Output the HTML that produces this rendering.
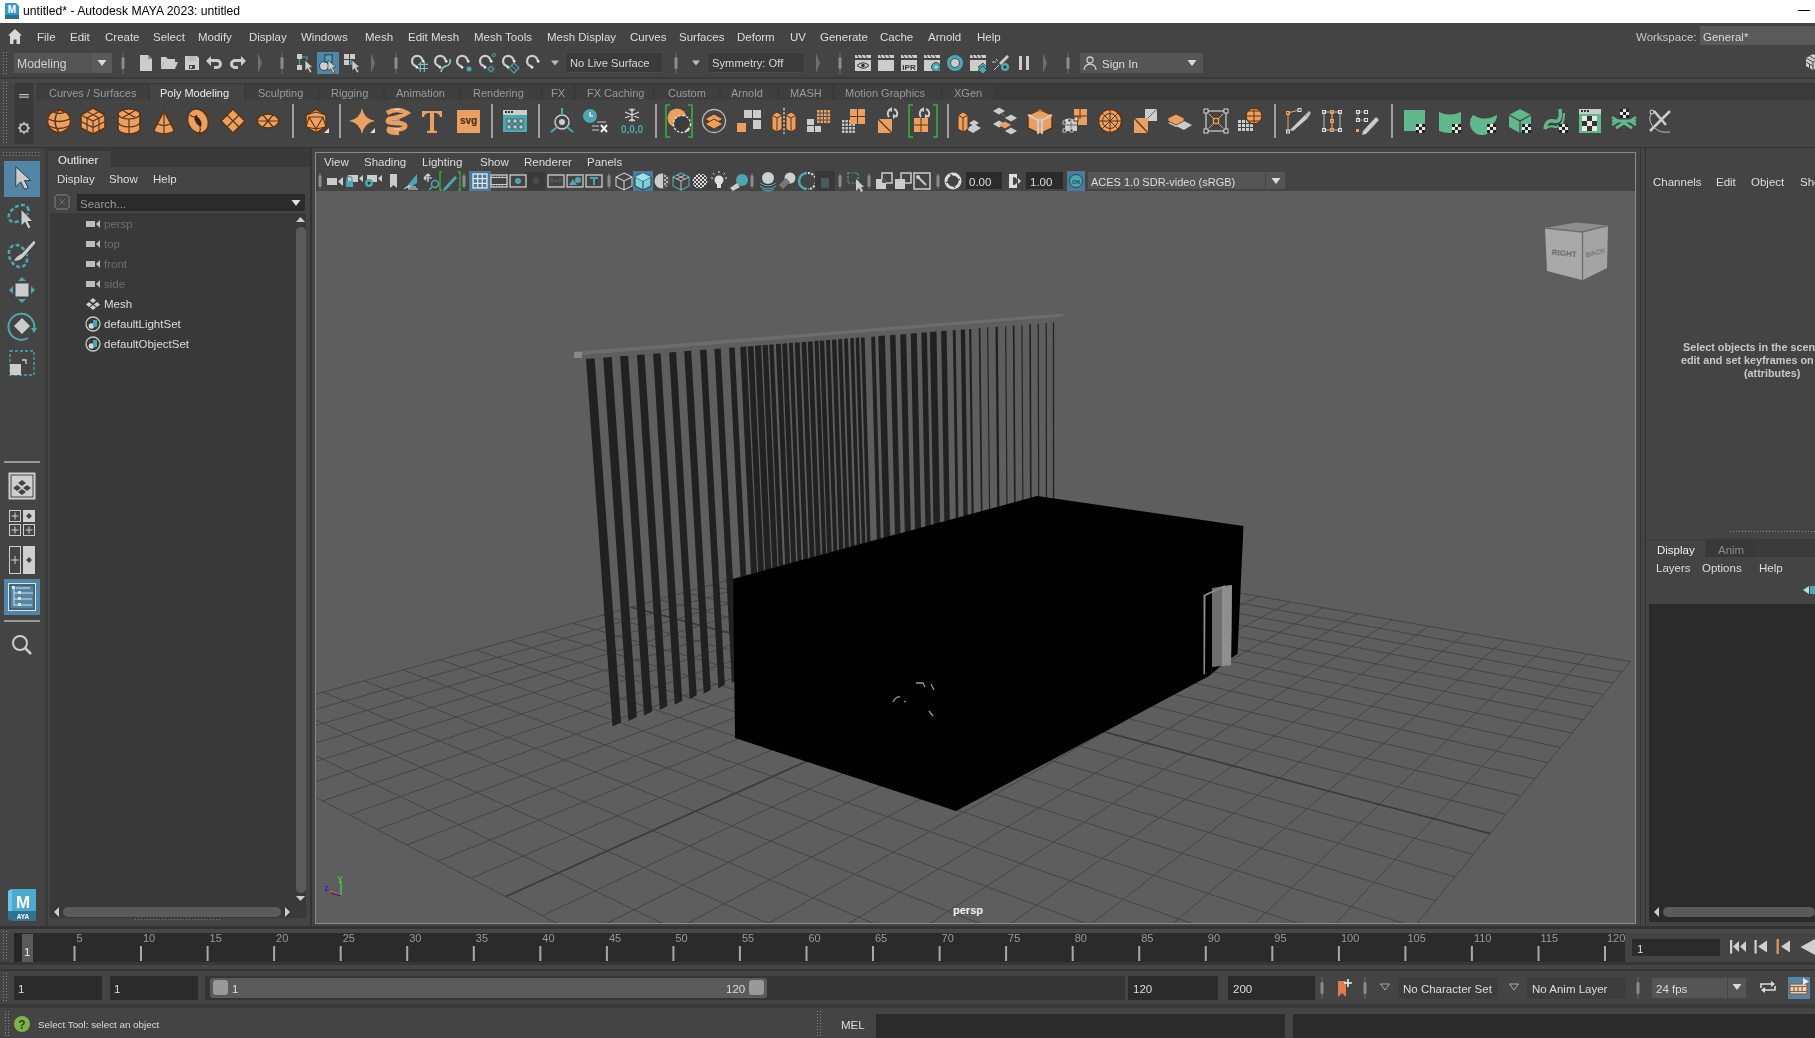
<!DOCTYPE html><html><head><meta charset="utf-8"><style>html,body{margin:0;padding:0;width:1815px;height:1038px;overflow:hidden;background:#444;font-family:"Liberation Sans", sans-serif;}
.b{position:absolute;}
.t{position:absolute;white-space:nowrap;line-height:1;will-change:transform;}
</style></head><body><div class="b" style="left:0px;top:0px;width:1815px;height:23px;background:#ffffff;"></div><svg class="b" style="left:4px;top:2px" width="16" height="18" viewBox="0 0 16 18"><path d="M1 1h11l3 3v13H1z" fill="#3d97c3"/><path d="M1 13h14v4H1z" fill="#2f6f8e"/><text x="8" y="11" font-family="Liberation Sans" font-size="10" font-weight="bold" fill="#fff" text-anchor="middle">M</text></svg><div class="t" style="left:23px;top:5px;font-size:12.2px;color:#000;font-weight:normal;">untitled* - Autodesk MAYA 2023: untitled</div><div class="b" style="left:1798px;top:10px;width:12px;height:1px;background:#000;"></div><div class="b" style="left:0px;top:23px;width:1815px;height:27px;background:#444444;"></div><div class="t" style="left:37px;top:32px;font-size:11.5px;color:#dddddd;font-weight:normal;">File</div><div class="t" style="left:70px;top:32px;font-size:11.5px;color:#dddddd;font-weight:normal;">Edit</div><div class="t" style="left:105px;top:32px;font-size:11.5px;color:#dddddd;font-weight:normal;">Create</div><div class="t" style="left:153px;top:32px;font-size:11.5px;color:#dddddd;font-weight:normal;">Select</div><div class="t" style="left:198px;top:32px;font-size:11.5px;color:#dddddd;font-weight:normal;">Modify</div><div class="t" style="left:249px;top:32px;font-size:11.5px;color:#dddddd;font-weight:normal;">Display</div><div class="t" style="left:301px;top:32px;font-size:11.5px;color:#dddddd;font-weight:normal;">Windows</div><div class="t" style="left:365px;top:32px;font-size:11.5px;color:#dddddd;font-weight:normal;">Mesh</div><div class="t" style="left:408px;top:32px;font-size:11.5px;color:#dddddd;font-weight:normal;">Edit Mesh</div><div class="t" style="left:474px;top:32px;font-size:11.5px;color:#dddddd;font-weight:normal;">Mesh Tools</div><div class="t" style="left:547px;top:32px;font-size:11.5px;color:#dddddd;font-weight:normal;">Mesh Display</div><div class="t" style="left:630px;top:32px;font-size:11.5px;color:#dddddd;font-weight:normal;">Curves</div><div class="t" style="left:679px;top:32px;font-size:11.5px;color:#dddddd;font-weight:normal;">Surfaces</div><div class="t" style="left:737px;top:32px;font-size:11.5px;color:#dddddd;font-weight:normal;">Deform</div><div class="t" style="left:790px;top:32px;font-size:11.5px;color:#dddddd;font-weight:normal;">UV</div><div class="t" style="left:820px;top:32px;font-size:11.5px;color:#dddddd;font-weight:normal;">Generate</div><div class="t" style="left:880px;top:32px;font-size:11.5px;color:#dddddd;font-weight:normal;">Cache</div><div class="t" style="left:928px;top:32px;font-size:11.5px;color:#dddddd;font-weight:normal;">Arnold</div><div class="t" style="left:977px;top:32px;font-size:11.5px;color:#dddddd;font-weight:normal;">Help</div><div class="t" style="left:1636px;top:32px;font-size:11.5px;color:#c8c8c8;font-weight:normal;">Workspace:</div><div class="b" style="left:1700px;top:26px;width:115px;height:19px;background:#5a5a5a;"></div><div class="t" style="left:1703px;top:32px;font-size:11.5px;color:#d8d8d8;font-weight:normal;">General*</div><div class="b" style="left:14px;top:53px;width:98px;height:20px;background:#555555;"></div><div class="b" style="left:92px;top:53px;width:20px;height:20px;background:#5a5a5a;"></div><div class="t" style="left:17px;top:58px;font-size:12.2px;color:#d0d0d0;font-weight:normal;">Modeling</div><div class="b" style="left:565px;top:52px;width:98px;height:21px;background:#3b3b3b;border:1px solid #484848;box-sizing:border-box"></div><div class="t" style="left:570px;top:58px;font-size:11.2px;color:#d8d8d8;font-weight:normal;">No Live Surface</div><div class="b" style="left:707px;top:52px;width:98px;height:21px;background:#3b3b3b;border:1px solid #484848;box-sizing:border-box"></div><div class="t" style="left:712px;top:58px;font-size:11.2px;color:#d8d8d8;font-weight:normal;">Symmetry: Off</div><div class="b" style="left:1080px;top:53px;width:123px;height:20px;background:#555555;"></div><div class="t" style="left:1102px;top:59px;font-size:11.5px;color:#dcdcdc;font-weight:normal;">Sign In</div><div class="b" style="left:0px;top:77px;width:1815px;height:2px;background:#3a3a3a;"></div><div class="b" style="left:0px;top:79px;width:1815px;height:4px;background:#484848;"></div><div class="b" style="left:37px;top:83px;width:1778px;height:17px;background:#3a3a3a;"></div><div class="b" style="left:15px;top:83px;width:18px;height:61px;background:#393939;"></div><div class="b" style="left:39px;top:85px;width:109px;height:15px;background:#3f3f3f;"></div><div class="t" style="left:49px;top:88px;font-size:11px;color:#9a9a9a;font-weight:normal;">Curves / Surfaces</div><div class="b" style="left:150px;top:84px;width:94px;height:17px;background:#444444;"></div><div class="t" style="left:160px;top:88px;font-size:11px;color:#eeeeee;font-weight:normal;">Poly Modeling</div><div class="b" style="left:247px;top:85px;width:71px;height:15px;background:#3f3f3f;"></div><div class="t" style="left:258px;top:88px;font-size:11px;color:#9a9a9a;font-weight:normal;">Sculpting</div><div class="b" style="left:320px;top:85px;width:63px;height:15px;background:#3f3f3f;"></div><div class="t" style="left:331px;top:88px;font-size:11px;color:#9a9a9a;font-weight:normal;">Rigging</div><div class="b" style="left:386px;top:85px;width:73px;height:15px;background:#3f3f3f;"></div><div class="t" style="left:396px;top:88px;font-size:11px;color:#9a9a9a;font-weight:normal;">Animation</div><div class="b" style="left:462px;top:85px;width:78px;height:15px;background:#3f3f3f;"></div><div class="t" style="left:473px;top:88px;font-size:11px;color:#9a9a9a;font-weight:normal;">Rendering</div><div class="b" style="left:543px;top:85px;width:30px;height:15px;background:#3f3f3f;"></div><div class="t" style="left:551px;top:88px;font-size:11px;color:#9a9a9a;font-weight:normal;">FX</div><div class="b" style="left:576px;top:85px;width:77px;height:15px;background:#3f3f3f;"></div><div class="t" style="left:587px;top:88px;font-size:11px;color:#9a9a9a;font-weight:normal;">FX Caching</div><div class="b" style="left:655px;top:85px;width:64px;height:15px;background:#3f3f3f;"></div><div class="t" style="left:668px;top:88px;font-size:11px;color:#9a9a9a;font-weight:normal;">Custom</div><div class="b" style="left:721px;top:85px;width:56px;height:15px;background:#3f3f3f;"></div><div class="t" style="left:731px;top:88px;font-size:11px;color:#9a9a9a;font-weight:normal;">Arnold</div><div class="b" style="left:780px;top:85px;width:52px;height:15px;background:#3f3f3f;"></div><div class="t" style="left:790px;top:88px;font-size:11px;color:#9a9a9a;font-weight:normal;">MASH</div><div class="b" style="left:835px;top:85px;width:106px;height:15px;background:#3f3f3f;"></div><div class="t" style="left:845px;top:88px;font-size:11px;color:#9a9a9a;font-weight:normal;">Motion Graphics</div><div class="b" style="left:943px;top:85px;width:50px;height:15px;background:#3f3f3f;"></div><div class="t" style="left:954px;top:88px;font-size:11px;color:#9a9a9a;font-weight:normal;">XGen</div><div class="b" style="left:33px;top:100px;width:1782px;height:44px;background:#444444;"></div><div class="b" style="left:0px;top:147px;width:1815px;height:2px;background:#353535;"></div><div class="b" style="left:0px;top:148px;width:45px;height:778px;background:#444444;"></div><div class="b" style="left:4px;top:161px;width:36px;height:36px;background:#5285a6;"></div><div class="b" style="left:45px;top:148px;width:3px;height:778px;background:#3a3a3a;"></div><div class="b" style="left:48px;top:148px;width:263px;height:778px;background:#444444;"></div><div class="b" style="left:48px;top:148px;width:263px;height:19px;background:#393939;"></div><div class="b" style="left:48px;top:151px;width:63px;height:16px;background:#444444;"></div><div class="t" style="left:58px;top:155px;font-size:11.5px;color:#eeeeee;font-weight:normal;">Outliner</div><div class="t" style="left:57px;top:174px;font-size:11.5px;color:#dddddd;font-weight:normal;">Display</div><div class="t" style="left:109px;top:174px;font-size:11.5px;color:#dddddd;font-weight:normal;">Show</div><div class="t" style="left:153px;top:174px;font-size:11.5px;color:#dddddd;font-weight:normal;">Help</div><div class="b" style="left:77px;top:194px;width:228px;height:17px;background:#2b2b2b;"></div><div class="t" style="left:80px;top:199px;font-size:11.5px;color:#9a9a9a;font-weight:normal;">Search...</div><div class="b" style="left:50px;top:213px;width:256px;height:705px;background:#393939;"></div><div class="t" style="left:104px;top:219px;font-size:11.5px;color:#6e6e6e;font-weight:normal;">persp</div><div class="t" style="left:104px;top:239px;font-size:11.5px;color:#6e6e6e;font-weight:normal;">top</div><div class="t" style="left:104px;top:259px;font-size:11.5px;color:#6e6e6e;font-weight:normal;">front</div><div class="t" style="left:104px;top:279px;font-size:11.5px;color:#6e6e6e;font-weight:normal;">side</div><div class="t" style="left:104px;top:299px;font-size:11.5px;color:#dddddd;font-weight:normal;">Mesh</div><div class="t" style="left:104px;top:319px;font-size:11.5px;color:#dddddd;font-weight:normal;">defaultLightSet</div><div class="t" style="left:104px;top:339px;font-size:11.5px;color:#dddddd;font-weight:normal;">defaultObjectSet</div><div class="b" style="left:296px;top:227px;width:10px;height:666px;background:#5b5b5b;border-radius:5px"></div><div class="b" style="left:63px;top:907px;width:218px;height:10px;background:#5b5b5b;border-radius:5px"></div><div class="b" style="left:310px;top:148px;width:2px;height:778px;background:#333333;"></div><div class="b" style="left:312px;top:148px;width:1329px;height:779px;background:#444444;"></div><div class="b" style="left:316px;top:153px;width:1319px;height:17px;background:#444444;"></div><div class="t" style="left:324px;top:157px;font-size:11.5px;color:#dddddd;font-weight:normal;">View</div><div class="t" style="left:364px;top:157px;font-size:11.5px;color:#dddddd;font-weight:normal;">Shading</div><div class="t" style="left:422px;top:157px;font-size:11.5px;color:#dddddd;font-weight:normal;">Lighting</div><div class="t" style="left:480px;top:157px;font-size:11.5px;color:#dddddd;font-weight:normal;">Show</div><div class="t" style="left:524px;top:157px;font-size:11.5px;color:#dddddd;font-weight:normal;">Renderer</div><div class="t" style="left:587px;top:157px;font-size:11.5px;color:#dddddd;font-weight:normal;">Panels</div><div class="b" style="left:316px;top:170px;width:1319px;height:21px;background:#444444;"></div><div class="b" style="left:966px;top:172px;width:36px;height:17px;background:#2b2b2b;"></div><div class="t" style="left:969px;top:177px;font-size:11.5px;color:#dddddd;font-weight:normal;">0.00</div><div class="b" style="left:1026px;top:172px;width:37px;height:17px;background:#2b2b2b;"></div><div class="t" style="left:1030px;top:177px;font-size:11.5px;color:#dddddd;font-weight:normal;">1.00</div><div class="b" style="left:1067px;top:171px;width:18px;height:19px;background:#4a7a9a;"></div><div class="b" style="left:1088px;top:172px;width:197px;height:17px;background:#555555;"></div><div class="t" style="left:1091px;top:177px;font-size:11px;color:#dddddd;font-weight:normal;">ACES 1.0 SDR-video (sRGB)</div><svg class="b" style="left:316px;top:191px" width="1319" height="732" viewBox="316 191 1319 732"><rect x="316" y="191" width="1319" height="732" fill="#5e5e5e"/><path d="M898.6 533.2L1630.4 661.6M898.6 533.2L186.7 729.8M880.4 538.3L1621.9 672.0M920.0 537.0L206.9 740.3M861.6 543.4L1612.9 683.0M941.9 540.8L228.0 751.4M842.2 548.8L1603.5 694.6M964.4 544.8L250.1 762.9M822.1 554.4L1593.6 706.8M987.5 548.8L273.2 775.0M801.2 560.1L1583.1 719.6M1011.2 553.0L297.4 787.6M779.5 566.1L1572.1 733.1M1035.6 557.3L322.7 800.9M757.1 572.3L1560.4 747.5M1060.7 561.7L349.4 814.8M733.8 578.7L1548.0 762.7M1086.5 566.2L377.4 829.4M709.6 585.4L1534.9 778.8M1113.1 570.9L406.9 844.9M684.4 592.4L1520.9 795.9M1140.5 575.6L438.1 861.1M658.2 599.6L1506.0 814.2M1168.6 580.6L470.9 878.3M602.5 615.0L1473.2 854.4M1227.6 590.9L542.4 915.7M572.9 623.2L1455.0 876.8M1258.5 596.3L581.5 936.1M541.9 631.7L1435.4 900.8M1290.3 601.9L623.0 957.8M509.6 640.6L1414.3 926.6M1323.2 607.7L667.2 980.9M475.7 650.0L1391.6 954.6M1357.2 613.7L714.3 1005.5M440.3 659.8L1366.9 984.9M1392.3 619.8L764.7 1031.9M403.1 670.0L1340.0 1017.9M1428.6 626.2L818.8 1060.1M364.1 680.8L1310.6 1053.9M1466.2 632.8L876.9 1090.5M323.2 692.1L1278.4 1093.4M1505.0 639.6L939.4 1123.2M280.1 704.0L1243.0 1136.9M1545.3 646.6L1007.1 1158.6M234.6 716.5L1203.7 1185.0M1587.1 654.0L1080.4 1196.9M186.7 729.8L1160.1 1238.6M1630.4 661.6L1160.1 1238.6" stroke="#454545" stroke-width="1" fill="none"/><path d="M630.9 607.1L1490.2 833.6M1197.7 585.7L505.6 896.5" stroke="#3c3c3c" stroke-width="1.8" fill="none"/><path d="M586.0 359.0L594.6 358.3L621.1 722.5L612.5 726.5ZM603.2 357.7L611.7 357.0L636.9 717.0L628.4 721.0ZM620.1 356.3L628.1 355.7L652.1 711.6L644.1 715.6ZM637.0 355.0L644.5 354.4L667.3 706.1L659.8 710.1ZM653.1 353.8L660.6 353.2L682.3 700.7L674.8 704.7ZM669.1 352.5L676.1 352.0L696.7 695.2L689.7 699.2ZM684.2 351.3L691.2 350.8L710.7 689.8L703.7 693.8ZM700.0 350.1L706.5 349.6L724.9 684.4L718.4 688.4ZM714.4 349.0L720.7 348.5L738.2 678.9L731.9 682.9ZM729.0 347.8L734.7 347.4L751.2 673.5L745.5 677.5ZM740.2 346.9L746.3 346.5L763.1 700.0L757.0 700.0ZM747.7 346.4L753.5 345.9L769.9 700.0L764.1 700.0ZM754.9 345.8L761.1 345.3L777.2 700.0L771.0 700.0ZM762.5 345.2L767.8 344.8L783.5 700.0L778.2 700.0ZM769.2 344.7L773.6 344.3L788.9 700.0L784.5 700.0ZM775.9 344.1L780.8 343.8L795.8 700.0L790.9 700.0ZM782.2 343.7L787.1 343.3L801.8 700.0L796.9 700.0ZM788.9 343.1L792.9 342.8L807.2 700.0L803.2 700.0ZM794.8 342.7L799.6 342.3L813.6 700.0L808.8 700.0ZM801.5 342.2L806.3 341.8L820.0 700.0L815.2 700.0ZM807.8 341.7L812.6 341.3L826.0 700.0L821.2 700.0ZM814.5 341.1L818.5 340.8L831.5 700.0L827.5 700.0ZM819.7 340.7L824.2 340.4L837.0 700.0L832.5 700.0ZM826.0 340.2L830.0 339.9L842.5 700.0L838.5 700.0ZM831.9 339.8L836.3 339.4L848.5 700.0L844.1 700.0ZM838.1 339.3L842.1 339.0L854.0 700.0L850.0 700.0ZM844.0 338.8L847.9 338.5L859.4 700.0L855.5 700.0ZM850.2 338.3L853.8 338.1L865.0 700.0L861.4 700.0ZM855.6 337.9L859.2 337.6L870.1 700.0L866.5 700.0ZM861.0 337.5L864.6 337.2L875.2 700.0L871.6 700.0ZM871.2 336.7L875.1 336.4L885.2 700.0L881.3 700.0ZM878.3 336.1L884.9 335.6L894.6 700.0L888.0 700.0ZM890.0 335.2L895.5 334.8L904.6 700.0L899.1 700.0ZM900.2 334.4L906.2 334.0L914.7 700.0L908.7 700.0ZM910.7 333.6L916.8 333.1L924.8 700.0L918.7 700.0ZM921.4 332.8L926.9 332.3L934.3 700.0L928.8 700.0ZM929.9 332.1L936.5 331.6L943.4 700.0L936.8 700.0ZM941.1 331.2L946.6 330.8L952.9 700.0L947.4 700.0ZM952.8 330.3L955.6 330.1L961.3 700.0L958.5 700.0ZM960.7 329.7L965.1 329.4L970.4 700.0L966.0 700.0ZM969.1 329.0L971.3 328.9L976.1 700.0L973.9 700.0ZM978.7 328.3L980.4 328.2L984.7 700.0L983.0 700.0ZM987.1 327.6L988.2 327.5L992.1 700.0L991.0 700.0ZM995.5 327.0L997.8 326.8L1001.2 700.0L998.9 700.0ZM1005.1 326.2L1006.2 326.1L1009.0 700.0L1007.9 700.0ZM1012.8 325.6L1014.5 325.5L1017.0 700.0L1015.3 700.0ZM1021.4 325.0L1022.5 324.9L1024.4 700.0L1023.3 700.0ZM1029.3 324.3L1030.9 324.2L1032.4 700.0L1030.8 700.0ZM1037.6 323.7L1038.8 323.6L1039.9 700.0L1038.7 700.0ZM1045.6 323.1L1046.8 323.0L1047.4 700.0L1046.2 700.0ZM1052.8 322.5L1054.1 322.4L1054.3 700.0L1053.0 700.0Z" fill="#212121"/><path d="M576 351.5L1063 313.5L1063 316.5L576 355.5Z" fill="#6c6c6c"/><rect x="574" y="352" width="8" height="6" fill="#888888"/><path d="M733 579L1037 496L1243.5 526L1237.5 654L1228 660L1209 676L956 811L735 738Z" fill="#000"/><path d="M1212 588L1232 585L1231 665L1212 667Z" fill="#6e6e6e"/><path d="M1222 586.5L1232 585L1231 665L1222 666Z" fill="#8e8e8e"/><path d="M1203.5 595L1225 585L1225.5 586.5L1205.5 596L1205 674L1203.5 674Z" fill="#8c8c8c"/><path d="M893 702Q896 696 900 697M916 683H923L925 687M931 684L934 690M929 711L933 716M904 702l2 -1" stroke="#9a9a9a" stroke-width="1.3" fill="none"/><path d="M1545 228L1576 222.5L1608 225.5L1582 232Z" fill="#8e8e8e"/><path d="M1545 228L1582 232L1582 280L1547 271Z" fill="#a9a9a9"/><path d="M1583 232L1608 225.5L1607 268L1583 280Z" fill="#a4a4a4"/><path d="M1545 228L1582 232L1608 225.5M1582.5 232V280" stroke="#6e6e6e" stroke-width="1.3" fill="none"/><text x="1564" y="256" font-family="Liberation Sans" font-size="8" font-weight="bold" fill="#6a6a6a" text-anchor="middle" transform="rotate(5 1564 256)">RIGHT</text><text x="1596" y="255" font-family="Liberation Sans" font-size="7" font-weight="bold" fill="#7a7a7a" text-anchor="middle" transform="rotate(-14 1596 255)">BACK</text><path d="M341 896V881" stroke="#4fd04f" stroke-width="1.3"/><path d="M341 896L330 891" stroke="#d04a4a" stroke-width="2"/><path d="M341 896L331 893" stroke="#1a1aa0" stroke-width="1.3"/><text x="338" y="881" font-family="Liberation Sans" font-size="9" fill="#4fd04f">y</text><text x="324" y="891" font-family="Liberation Sans" font-size="9" font-weight="bold" fill="#2a2ad0">z</text><text x="968" y="914" font-family="Liberation Sans" font-size="11" font-weight="bold" fill="#f0f0f0" text-anchor="middle">persp</text></svg><div class="b" style="left:315px;top:152px;width:1321px;height:772px;background:transparent;border:1px solid #8a8a8a;box-sizing:border-box"></div><div class="b" style="left:1640px;top:148px;width:1px;height:778px;background:#333333;"></div><div class="b" style="left:1641px;top:148px;width:174px;height:778px;background:#444444;"></div><div class="b" style="left:1645px;top:148px;width:1px;height:778px;background:#303030;"></div><div class="t" style="left:1653px;top:177px;font-size:11.5px;color:#dddddd;font-weight:normal;">Channels</div><div class="t" style="left:1716px;top:177px;font-size:11.5px;color:#dddddd;font-weight:normal;">Edit</div><div class="t" style="left:1751px;top:177px;font-size:11.5px;color:#dddddd;font-weight:normal;">Object</div><div class="t" style="left:1800px;top:177px;font-size:11.5px;color:#dddddd;font-weight:normal;">Show</div><div class="t" style="left:1682.6px;top:342px;font-size:10.8px;font-weight:bold;color:#c8c8c8">Select objects in the scene to</div><div class="t" style="left:1681px;top:355px;font-size:10.8px;font-weight:bold;color:#c8c8c8">edit and set keyframes on channels</div><div class="t" style="left:1743.7px;top:368px;font-size:10.8px;font-weight:bold;color:#c8c8c8">(attributes)</div><div class="b" style="left:1647px;top:539px;width:168px;height:18px;background:#3b3b3b;"></div><div class="b" style="left:1647px;top:540px;width:58px;height:17px;background:#444444;"></div><div class="b" style="left:1706px;top:541px;width:49px;height:16px;background:#383838;"></div><div class="t" style="left:1657px;top:545px;font-size:11.5px;color:#eeeeee;font-weight:normal;">Display</div><div class="t" style="left:1718px;top:545px;font-size:11.5px;color:#8a8a8a;font-weight:normal;">Anim</div><div class="t" style="left:1656px;top:563px;font-size:11.5px;color:#dddddd;font-weight:normal;">Layers</div><div class="t" style="left:1702px;top:563px;font-size:11.5px;color:#dddddd;font-weight:normal;">Options</div><div class="t" style="left:1759px;top:563px;font-size:11.5px;color:#dddddd;font-weight:normal;">Help</div><div class="b" style="left:1649px;top:604px;width:166px;height:318px;background:#2b2b2b;"></div><div class="b" style="left:1663px;top:907px;width:152px;height:10px;background:#5b5b5b;border-radius:5px"></div><div class="b" style="left:0px;top:926px;width:1815px;height:3px;background:#333333;"></div><div class="b" style="left:0px;top:929px;width:1815px;height:4px;background:#484848;"></div><div class="b" style="left:0px;top:962px;width:1815px;height:3px;background:#373737;"></div><div class="b" style="left:14px;top:933px;width:1611px;height:29px;background:#2b2b2b;"></div><div class="b" style="left:14px;top:933px;width:8px;height:29px;background:#262626;"></div><div class="b" style="left:22px;top:934px;width:11px;height:28px;background:#5a5a5a;"></div><div class="t" style="left:24px;top:947px;font-size:11.5px;color:#eeeeee;font-weight:normal;">1</div><svg class="b" style="left:0;top:0" width="1815" height="1038"><rect x="73.5" y="946" width="2" height="15" fill="#a8a8a8"/><text x="76.5" y="942" font-family="Liberation Sans" font-size="11" fill="#9a9a9a">5</text><rect x="140.0" y="946" width="2" height="15" fill="#a8a8a8"/><text x="143.0" y="942" font-family="Liberation Sans" font-size="11" fill="#9a9a9a">10</text><rect x="206.6" y="946" width="2" height="15" fill="#a8a8a8"/><text x="209.6" y="942" font-family="Liberation Sans" font-size="11" fill="#9a9a9a">15</text><rect x="273.1" y="946" width="2" height="15" fill="#a8a8a8"/><text x="276.1" y="942" font-family="Liberation Sans" font-size="11" fill="#9a9a9a">20</text><rect x="339.7" y="946" width="2" height="15" fill="#a8a8a8"/><text x="342.7" y="942" font-family="Liberation Sans" font-size="11" fill="#9a9a9a">25</text><rect x="406.2" y="946" width="2" height="15" fill="#a8a8a8"/><text x="409.2" y="942" font-family="Liberation Sans" font-size="11" fill="#9a9a9a">30</text><rect x="472.8" y="946" width="2" height="15" fill="#a8a8a8"/><text x="475.8" y="942" font-family="Liberation Sans" font-size="11" fill="#9a9a9a">35</text><rect x="539.3" y="946" width="2" height="15" fill="#a8a8a8"/><text x="542.3" y="942" font-family="Liberation Sans" font-size="11" fill="#9a9a9a">40</text><rect x="605.9" y="946" width="2" height="15" fill="#a8a8a8"/><text x="608.9" y="942" font-family="Liberation Sans" font-size="11" fill="#9a9a9a">45</text><rect x="672.4" y="946" width="2" height="15" fill="#a8a8a8"/><text x="675.4" y="942" font-family="Liberation Sans" font-size="11" fill="#9a9a9a">50</text><rect x="738.9" y="946" width="2" height="15" fill="#a8a8a8"/><text x="741.9" y="942" font-family="Liberation Sans" font-size="11" fill="#9a9a9a">55</text><rect x="805.5" y="946" width="2" height="15" fill="#a8a8a8"/><text x="808.5" y="942" font-family="Liberation Sans" font-size="11" fill="#9a9a9a">60</text><rect x="872.0" y="946" width="2" height="15" fill="#a8a8a8"/><text x="875.0" y="942" font-family="Liberation Sans" font-size="11" fill="#9a9a9a">65</text><rect x="938.6" y="946" width="2" height="15" fill="#a8a8a8"/><text x="941.6" y="942" font-family="Liberation Sans" font-size="11" fill="#9a9a9a">70</text><rect x="1005.1" y="946" width="2" height="15" fill="#a8a8a8"/><text x="1008.1" y="942" font-family="Liberation Sans" font-size="11" fill="#9a9a9a">75</text><rect x="1071.7" y="946" width="2" height="15" fill="#a8a8a8"/><text x="1074.7" y="942" font-family="Liberation Sans" font-size="11" fill="#9a9a9a">80</text><rect x="1138.2" y="946" width="2" height="15" fill="#a8a8a8"/><text x="1141.2" y="942" font-family="Liberation Sans" font-size="11" fill="#9a9a9a">85</text><rect x="1204.8" y="946" width="2" height="15" fill="#a8a8a8"/><text x="1207.8" y="942" font-family="Liberation Sans" font-size="11" fill="#9a9a9a">90</text><rect x="1271.3" y="946" width="2" height="15" fill="#a8a8a8"/><text x="1274.3" y="942" font-family="Liberation Sans" font-size="11" fill="#9a9a9a">95</text><rect x="1337.9" y="946" width="2" height="15" fill="#a8a8a8"/><text x="1340.9" y="942" font-family="Liberation Sans" font-size="11" fill="#9a9a9a">100</text><rect x="1404.4" y="946" width="2" height="15" fill="#a8a8a8"/><text x="1407.4" y="942" font-family="Liberation Sans" font-size="11" fill="#9a9a9a">105</text><rect x="1470.9" y="946" width="2" height="15" fill="#a8a8a8"/><text x="1473.9" y="942" font-family="Liberation Sans" font-size="11" fill="#9a9a9a">110</text><rect x="1537.5" y="946" width="2" height="15" fill="#a8a8a8"/><text x="1540.5" y="942" font-family="Liberation Sans" font-size="11" fill="#9a9a9a">115</text><rect x="1604.0" y="946" width="2" height="15" fill="#a8a8a8"/><text x="1607.0" y="942" font-family="Liberation Sans" font-size="11" fill="#9a9a9a">120</text></svg><div class="b" style="left:1632px;top:939px;width:88px;height:17px;background:#2b2b2b;"></div><div class="t" style="left:1637px;top:944px;font-size:11.5px;color:#dddddd;font-weight:normal;">1</div><div class="b" style="left:0px;top:965px;width:1815px;height:11px;background:#444444;"></div><div class="b" style="left:0px;top:969px;width:1815px;height:2px;background:#363636;"></div><div class="b" style="left:14px;top:976px;width:88px;height:24px;background:#2b2b2b;"></div><div class="t" style="left:18px;top:984px;font-size:11.5px;color:#dddddd;font-weight:normal;">1</div><div class="b" style="left:110px;top:976px;width:88px;height:24px;background:#2b2b2b;"></div><div class="t" style="left:114px;top:984px;font-size:11.5px;color:#dddddd;font-weight:normal;">1</div><div class="b" style="left:205px;top:976px;width:920px;height:24px;background:#353535;"></div><div class="b" style="left:210px;top:978px;width:557px;height:20px;background:#5a5a5a;border-radius:3px"></div><div class="b" style="left:213px;top:980px;width:15px;height:15px;background:#999999;border-radius:3px"></div><div class="b" style="left:749px;top:980px;width:15px;height:15px;background:#999999;border-radius:3px"></div><div class="t" style="left:232px;top:984px;font-size:11.5px;color:#dddddd;font-weight:normal;">1</div><div class="t" style="left:726px;top:984px;font-size:11.5px;color:#dddddd;font-weight:normal;">120</div><div class="b" style="left:1128px;top:976px;width:90px;height:24px;background:#2b2b2b;"></div><div class="t" style="left:1133px;top:984px;font-size:11.5px;color:#dddddd;font-weight:normal;">120</div><div class="b" style="left:1228px;top:976px;width:87px;height:24px;background:#2b2b2b;"></div><div class="t" style="left:1233px;top:984px;font-size:11.5px;color:#dddddd;font-weight:normal;">200</div><div class="b" style="left:1398px;top:977px;width:100px;height:22px;background:#3d3d3d;"></div><div class="t" style="left:1403px;top:984px;font-size:11.5px;color:#dddddd;font-weight:normal;">No Character Set</div><div class="b" style="left:1527px;top:977px;width:99px;height:22px;background:#3d3d3d;"></div><div class="t" style="left:1532px;top:984px;font-size:11.5px;color:#dddddd;font-weight:normal;">No Anim Layer</div><div class="b" style="left:1652px;top:978px;width:94px;height:20px;background:#555555;"></div><div class="t" style="left:1656px;top:984px;font-size:11.5px;color:#dddddd;font-weight:normal;">24 fps</div><div class="b" style="left:1788px;top:977px;width:22px;height:22px;background:#5285a6;"></div><div class="b" style="left:0px;top:1004px;width:1815px;height:4px;background:#3a3a3a;"></div><div class="b" style="left:876px;top:1014px;width:409px;height:24px;background:#2b2b2b;"></div><div class="b" style="left:1293px;top:1014px;width:522px;height:24px;background:#2b2b2b;"></div><div class="t" style="left:841px;top:1020px;font-size:11.5px;color:#dddddd;font-weight:normal;">MEL</div><svg class="b" style="left:13px;top:1015px" width="18" height="18"><circle cx="9" cy="9" r="8" fill="#7fb24a"/><text x="9" y="13.5" font-family="Liberation Sans" font-size="12" font-weight="bold" fill="#2c3a1e" text-anchor="middle">?</text></svg><div class="t" style="left:38px;top:1020px;font-size:9.8px;color:#dddddd;font-weight:normal;">Select Tool: select an object</div><svg class="b" style="left:0;top:0" width="1815" height="1038"><path d="M15 29L8 35.5H10V44H13.5V39.5H16.5V44H20V35.5H22Z" fill="#d8d8d8"/><rect x="122.5" y="52" width="1" height="22" fill="#6a6a6a"/><rect x="121.5" y="57.0" width="3" height="12" rx="1.5" fill="#8c8c8c"/><g transform="translate(146,63)"><path d="M-6 -8H2L6 -4V8H-6Z" fill="#cccccc"/><path d="M2 -8L6 -4H2Z" fill="#8a8a8a"/></g><g transform="translate(169,63)"><path d="M-8 -6H-3L-1 -4H6V-1H-5L-8 6Z" fill="#cccccc"/><path d="M-5 -1H9L6 6H-8Z" fill="#cccccc"/></g><g transform="translate(192,63)"><path d="M-7 -7H5L7 -5V7H-7Z" fill="#cccccc"/><rect x="-4" y="-7" width="8" height="5" fill="#bdbdbd"/><rect x="-3" y="2" width="6" height="4" fill="#444"/><rect x="-2" y="3" width="2" height="2" fill="#cccccc"/></g><g transform="translate(214,63)"><path d="M-8 -2L-3 -7V-4H3A5 5 0 0 1 3 6H0V3H3A2 2 0 0 0 3 -1H-3V3Z" fill="#cccccc"/></g><g transform="translate(238,63) scale(-1,1)"><path d="M-8 -2L-3 -7V-4H3A5 5 0 0 1 3 6H0V3H3A2 2 0 0 0 3 -1H-3V3Z" fill="#cccccc"/></g><path d="M258 53L262 63.0L258 73Z" fill="#6e6e6e"/><rect x="281.5" y="52" width="1" height="22" fill="#6a6a6a"/><rect x="280.5" y="57.0" width="3" height="12" rx="1.5" fill="#8c8c8c"/><rect x="317" y="52" width="22" height="22" fill="#5285a6"/><g transform="translate(305,63)"><rect x="-8" y="-9" width="5" height="5" fill="#cccccc"/><rect x="-8" y="2" width="5" height="5" fill="#cccccc"/><path d="M-5.5 -4V2M-3 -6H2V-3" stroke="#4ea6b0" stroke-width="1.2" fill="none"/><path d="M0 -3L0 8L2.5 5.5L5 10L7 9L4.5 4.5H8Z" fill="#cccccc" stroke="#333" stroke-width="0.6"/></g><g transform="translate(328,63)"><circle cx="-4" cy="3" r="4.5" fill="#cccccc" stroke="#2b4a5e" stroke-width="1"/><rect x="-3" y="-8" width="7" height="7" fill="none" stroke="#2b4a5e" stroke-width="1.5"/><rect x="-2.5" y="-7.5" width="6" height="6" fill="#4ea6b0"/><path d="M0 -3L0 8L2.5 5.5L5 10L7 9L4.5 4.5H8Z" fill="#cccccc" stroke="#333" stroke-width="0.6"/></g><g transform="translate(352,63)"><rect x="-8" y="-9" width="5" height="5" fill="#cccccc"/><rect x="-2" y="-9" width="5" height="5" fill="#cccccc"/><rect x="-8" y="-3" width="5" height="5" fill="#cccccc"/><rect x="-2" y="-3" width="3" height="5" fill="#4ea6b0"/><path d="M0 -3L0 8L2.5 5.5L5 10L7 9L4.5 4.5H8Z" fill="#cccccc" stroke="#333" stroke-width="0.6"/></g><path d="M371 53L375 63.0L371 73Z" fill="#6e6e6e"/><rect x="395.5" y="52" width="1" height="22" fill="#6a6a6a"/><rect x="394.5" y="57.0" width="3" height="12" rx="1.5" fill="#8c8c8c"/><g transform="translate(419,63)"><path d="M-2.6 3.2A5.2 5.2 0 1 1 3.4 -2.6" stroke="#cccccc" stroke-width="2.3" fill="none"/><rect x="-3.2" y="3" width="2.4" height="2.4" transform="rotate(45 -2 4.2)" fill="#e8f4f4"/><rect x="3" y="-3" width="2.4" height="2.4" transform="rotate(45 4.2 -1.8)" fill="#e8f4f4"/><path d="M1.3 -1V9M5.3 -1V9M-1 1.4H9M-1 5.5H9" stroke="#7cc4c4" stroke-width="1.1"/></g><g transform="translate(442,63)"><path d="M-2.6 3.2A5.2 5.2 0 1 1 3.4 -2.6" stroke="#cccccc" stroke-width="2.3" fill="none"/><rect x="-3.2" y="3" width="2.4" height="2.4" transform="rotate(45 -2 4.2)" fill="#e8f4f4"/><rect x="3" y="-3" width="2.4" height="2.4" transform="rotate(45 4.2 -1.8)" fill="#e8f4f4"/><path d="M-1 9Q0 4 4 3Q9 2 8 -4" stroke="#8ccaca" stroke-width="1.6" fill="none"/></g><g transform="translate(464,63)"><path d="M-2.6 3.2A5.2 5.2 0 1 1 3.4 -2.6" stroke="#cccccc" stroke-width="2.3" fill="none"/><rect x="-3.2" y="3" width="2.4" height="2.4" transform="rotate(45 -2 4.2)" fill="#e8f4f4"/><rect x="3" y="-3" width="2.4" height="2.4" transform="rotate(45 4.2 -1.8)" fill="#e8f4f4"/><circle cx="5" cy="6" r="2.5" fill="#4ea6b0"/></g><g transform="translate(487,63)"><path d="M-2.6 3.2A5.2 5.2 0 1 1 3.4 -2.6" stroke="#cccccc" stroke-width="2.3" fill="none"/><rect x="-3.2" y="3" width="2.4" height="2.4" transform="rotate(45 -2 4.2)" fill="#e8f4f4"/><rect x="3" y="-3" width="2.4" height="2.4" transform="rotate(45 4.2 -1.8)" fill="#e8f4f4"/><circle cx="4" cy="6" r="2.2" fill="none" stroke="#4ea6b0" stroke-width="1.1"/><path d="M0 6H1.5M6.5 6H8M4 2.5V3.5M4 8.5V9.5" stroke="#4ea6b0" stroke-width="0.9"/><circle cx="7" cy="-8" r="1.6" fill="none" stroke="#4ea6b0" stroke-width="0.9"/></g><g transform="translate(510,63)"><path d="M-2.6 3.2A5.2 5.2 0 1 1 3.4 -2.6" stroke="#cccccc" stroke-width="2.3" fill="none"/><rect x="-3.2" y="3" width="2.4" height="2.4" transform="rotate(45 -2 4.2)" fill="#e8f4f4"/><rect x="3" y="-3" width="2.4" height="2.4" transform="rotate(45 4.2 -1.8)" fill="#e8f4f4"/><path d="M-1 5L4 0L9 5L4 10Z" stroke="#4ea6b0" stroke-width="1.1" fill="none"/><path d="M1.5 2.5L6.5 7.5" stroke="#4ea6b0" stroke-width="1"/></g><g transform="translate(534,63)"><path d="M-2.6 3.2A5.2 5.2 0 1 1 3.4 -2.6" stroke="#cccccc" stroke-width="2.3" fill="none"/><rect x="-3.2" y="3" width="2.4" height="2.4" transform="rotate(45 -2 4.2)" fill="#e8f4f4"/><rect x="3" y="-3" width="2.4" height="2.4" transform="rotate(45 4.2 -1.8)" fill="#e8f4f4"/></g><path d="M551.0 60.5H559.0L555 65.5Z" fill="#bbbbbb"/><rect x="675.5" y="52" width="1" height="22" fill="#6a6a6a"/><rect x="674.5" y="57.0" width="3" height="12" rx="1.5" fill="#8c8c8c"/><path d="M692.0 60.5H700.0L696 65.5Z" fill="#bbbbbb"/><path d="M816 53L820 63.0L816 73Z" fill="#6e6e6e"/><rect x="839.5" y="52" width="1" height="22" fill="#6a6a6a"/><rect x="838.5" y="57.0" width="3" height="12" rx="1.5" fill="#8c8c8c"/><g transform="translate(863,63)"><rect x="-8" y="-8" width="16" height="3" fill="#cccccc"/><path d="M-6 -8l2 3M-2 -8l2 3M2 -8l2 3" stroke="#444" stroke-width="1"/><rect x="-8" y="-3" width="16" height="11" fill="#cccccc"/><path d="M-6 2.5Q0 -3 6 2.5Q0 8 -6 2.5Z" fill="none" stroke="#333" stroke-width="1"/><circle cx="0" cy="2.5" r="1.8" fill="#333"/></g><g transform="translate(886,63)"><rect x="-8" y="-8" width="16" height="3" fill="#cccccc"/><path d="M-6 -8l2 3M-2 -8l2 3M2 -8l2 3" stroke="#444" stroke-width="1"/><rect x="-8" y="-3" width="16" height="11" fill="#cccccc"/></g><g transform="translate(909,63)"><rect x="-8" y="-8" width="16" height="3" fill="#cccccc"/><path d="M-6 -8l2 3M-2 -8l2 3M2 -8l2 3" stroke="#444" stroke-width="1"/><rect x="-8" y="-3" width="16" height="11" fill="#cccccc"/><text x="0" y="6.5" font-family="Liberation Sans" font-size="8" font-weight="bold" fill="#333" text-anchor="middle">IPR</text></g><g transform="translate(932,63)"><rect x="-8" y="-8" width="16" height="3" fill="#cccccc"/><path d="M-6 -8l2 3M-2 -8l2 3M2 -8l2 3" stroke="#444" stroke-width="1"/><rect x="-8" y="-3" width="16" height="11" fill="#cccccc"/><circle cx="4" cy="4" r="4.5" fill="#4ea6b0" stroke="#333" stroke-width="0.8"/><circle cx="4" cy="4" r="1.5" fill="#cccccc"/></g><g transform="translate(955,63)"><circle r="8" fill="#4ea6b0"/><circle r="4.5" fill="#cccccc" stroke="#2d5a60" stroke-width="1"/></g><g transform="translate(978,63)"><rect x="-8" y="-8" width="16" height="3" fill="#cccccc"/><path d="M-6 -8l2 3M-2 -8l2 3M2 -8l2 3" stroke="#444" stroke-width="1"/><rect x="-8" y="-3" width="16" height="11" fill="#cccccc"/><path d="M0 4L5 0L9 4L5 8Z" fill="#4ea6b0" stroke="#333" stroke-width="0.7"/><path d="M0 7L5 3L9 7L5 11Z" fill="#4ea6b0" stroke="#333" stroke-width="0.7"/></g><g transform="translate(1001,63)"><path d="M-2 0L6 -8L8 -6L0 2Z" fill="#cccccc"/><path d="M-7 7L-2 2M-9 -1h4M-5 -4l2 2" stroke="#cccccc" stroke-width="1"/><circle cx="4" cy="4" r="4" fill="#4ea6b0"/><circle cx="4" cy="4" r="1.5" fill="#333"/></g><g transform="translate(1024,63)"><rect x="-5" y="-7" width="3" height="14" fill="#cccccc"/><rect x="2" y="-7" width="3" height="14" fill="#cccccc"/></g><path d="M1043 53L1047 63.0L1043 73Z" fill="#6e6e6e"/><rect x="1067.5" y="52" width="1" height="22" fill="#6a6a6a"/><rect x="1066.5" y="57.0" width="3" height="12" rx="1.5" fill="#8c8c8c"/><g transform="translate(1090,63)"><circle cx="0" cy="-3" r="3" fill="none" stroke="#cccccc" stroke-width="1.3"/><path d="M-6 7A6 6 0 0 1 6 7" fill="none" stroke="#cccccc" stroke-width="1.3"/></g><path d="M1187.5 60.0H1196.5L1192 66.0Z" fill="#dddddd"/><path d="M97.5 60.0H106.5L102 66.0Z" fill="#dddddd"/><g transform="translate(1806,58)"><path d="M0 0L7 -4L14 0V8L7 12L0 8Z" fill="#cfcfcf"/><path d="M0 0L7 4L14 0M7 4V12M3.5 -2L10.5 2M3.5 6V10M0 4L7 8" stroke="#444" stroke-width="1" fill="none"/></g><rect x="19" y="94" width="10" height="1.2" fill="#bbb"/><rect x="19" y="96.5" width="10" height="1.2" fill="#bbb"/><g transform="translate(24,128)"><circle r="4" fill="none" stroke="#bbb" stroke-width="2"/><path d="M0 -6V-4M0 4V6M-6 0H-4M4 0H6M-4.2 -4.2L-2.8 -2.8M2.8 2.8L4.2 4.2M-4.2 4.2L-2.8 2.8M2.8 -2.8L4.2 -4.2" stroke="#bbb" stroke-width="1.6"/></g><g transform="translate(59,121)"><circle r="11.5" fill="#e9a062" stroke="#5b3416" stroke-width="1.6"/><path d="M-11 -2Q0 3 11 -2M-10 5Q0 10 10 5M-6 -9Q0 -6 6 -9M0 -11.5Q-8 0 0 11.5M-8 -8L0 -11L8 -8" stroke="#5b3416" stroke-width="1.3" fill="none"/></g><g transform="translate(93,121)"><path d="M0 -13L12 -6V7L0 13L-12 7V-6Z" fill="#e9a062" stroke="#5b3416" stroke-width="1.6"/><path d="M-12 -6L0 0L12 -6M0 0V13M-6 -9.5L6 -3M6 -9.5L-6 -3M-12 0.5L0 6.5L12 0.5M-6 -3V10M6 -3V10" stroke="#5b3416" stroke-width="1.2" fill="none"/></g><g transform="translate(129,121)"><path d="M-11 -7A11 5 0 0 1 11 -7V8A11 5 0 0 1 -11 8Z" fill="#e9a062" stroke="#5b3416" stroke-width="1.6"/><path d="M-11 -7A11 5 0 0 0 11 -7M-11 1A11 5 0 0 0 11 1M0 -2V13M-7 -11L7 -3M7 -11L-7 -3" stroke="#5b3416" stroke-width="1.2" fill="none"/></g><g transform="translate(164,122)"><path d="M0 -11L10 8A10 4 0 0 1 -10 8Z" fill="#e9a062" stroke="#5b3416" stroke-width="1.6"/><path d="M0 -11V12M-6 2Q0 5 6 2" stroke="#5b3416" stroke-width="1.2" fill="none"/></g><g transform="translate(198,121)"><ellipse rx="10" ry="12.5" transform="rotate(-25)" fill="#e9a062" stroke="#5b3416" stroke-width="1.6"/><ellipse rx="2.5" ry="6" transform="rotate(-30)" fill="#3b2410"/><path d="M-8 -6Q-3 -2 -1 -6M2 5Q3 9 1 12" stroke="#5b3416" stroke-width="1.2" fill="none"/></g><g transform="translate(233,121)"><path d="M0 -12L12 0L0 12L-12 0Z" fill="#e9a062" stroke="#5b3416" stroke-width="1.6"/><path d="M-6 -6L6 6M6 -6L-6 6" stroke="#5b3416" stroke-width="1.3"/></g><g transform="translate(268,121)"><ellipse rx="11" ry="7" fill="#e9a062" stroke="#5b3416" stroke-width="1.6"/><path d="M-11 0H11M-5 -6L5 6M5 -6L-5 6" stroke="#5b3416" stroke-width="1.2"/></g><rect x="292" y="104" width="2" height="34" fill="#a0a0a0"/><g transform="translate(316,121)"><path d="M0 -12L10 -6V6L0 12L-10 6V-6Z" fill="#e9a062" stroke="#5b3416" stroke-width="1.6"/><path d="M-10 -6L0 -9L10 -6M-7 -4H7L0 8ZM-7 -4L-10 6M7 -4L10 6M0 8V12M-10 6L0 8L10 6" stroke="#5b3416" stroke-width="1.1" fill="none"/></g><path d="M329 133L329 128L324 133Z" fill="#dddddd"/><rect x="339" y="104" width="2" height="34" fill="#a0a0a0"/><g transform="translate(362,121)"><path d="M0 -13Q2 -2 13 0Q2 2 0 13Q-2 2 -13 0Q-2 -2 0 -13Z" fill="#e9a062"/></g><path d="M375 133L375 128L370 133Z" fill="#dddddd"/><g transform="translate(397,121)"><path d="M-10 -8Q0 -14 10 -8Q4 -4 -8 -2Q-12 2 -2 2Q10 2 8 6Q4 10 -8 8Q-10 12 2 12" stroke="#e9a062" stroke-width="4.5" fill="none"/><path d="M-3 -11L3 -12M-3 -1L3 -1M-3 8L3 8" stroke="#dcdcdc" stroke-width="1"/></g><g transform="translate(432,121)"><path d="M-10 -10H10V-4H8Q8 -7 4 -8H2V9Q2 10 5 10V12H-5V10Q-2 10 -2 9V-8H-4Q-8 -7 -8 -4H-10Z" fill="#e9a062"/></g><g transform="translate(468,121)"><rect x="-11" y="-11" width="23" height="23" fill="#e9a062"/><text x="0.5" y="3" font-family="Liberation Sans" font-size="10" font-weight="bold" fill="#3a2a1a" text-anchor="middle">svg</text></g><rect x="491" y="104" width="2" height="34" fill="#a0a0a0"/><g transform="translate(515,121)"><rect x="-12" y="-11" width="24" height="22" fill="#4ea6b0"/><rect x="-12" y="-11" width="24" height="5" fill="#cccccc"/><rect x="-10" y="-10" width="2" height="2" fill="#333"/><rect x="-7" y="-10" width="2" height="2" fill="#333"/><rect x="-4" y="-10" width="2" height="2" fill="#333"/><rect x="-8" y="-2" width="4" height="4" fill="#cccccc" stroke="#2c5358" stroke-width="0.8"/><rect x="-8" y="4" width="4" height="4" fill="#cccccc" stroke="#2c5358" stroke-width="0.8"/><rect x="-2" y="-2" width="4" height="4" fill="#cccccc" stroke="#2c5358" stroke-width="0.8"/><rect x="-2" y="4" width="4" height="4" fill="#cccccc" stroke="#2c5358" stroke-width="0.8"/><rect x="4" y="-2" width="4" height="4" fill="#cccccc" stroke="#2c5358" stroke-width="0.8"/><rect x="4" y="4" width="4" height="4" fill="#cccccc" stroke="#2c5358" stroke-width="0.8"/></g><rect x="538" y="104" width="2" height="34" fill="#a0a0a0"/><g transform="translate(562,121)"><circle cx="0" cy="1" r="7" fill="none" stroke="#cccccc" stroke-width="1.5"/><circle cx="0" cy="1" r="3" fill="#cccccc"/><path d="M0 -13V-6M-5 6L-11 11M5 6L11 11" stroke="#4ea6b0" stroke-width="2"/></g><g transform="translate(596,121)"><circle cx="-6" cy="-5" r="7" fill="#4ea6b0"/><path d="M-6 -9V-5H-3" stroke="#fff" stroke-width="1.2" fill="none"/><path d="M1 1H10M-4 5H3M-4 9H3" stroke="#cccccc" stroke-width="1"/><path d="M5 4L11 11M11 4L5 11" stroke="#eee" stroke-width="2"/></g><g transform="translate(632,121)"><path d="M0 -13V1M-7 -9L7 -3M7 -9L-7 -3M-3 -12L0 -10L3 -12M-3 0L0 -2L3 0" stroke="#d8d8d8" stroke-width="1.3" fill="none"/><text x="0" y="12" font-family="Liberation Sans" font-size="10" font-weight="bold" fill="#4ea6b0" text-anchor="middle">0,0,0</text></g><rect x="655" y="104" width="2" height="34" fill="#a0a0a0"/><path d="M670 105H666V137H670M688 105H692V137H688" stroke="#3cad3c" stroke-width="1.6" fill="none"/><g transform="translate(679,121)"><circle cx="-2" cy="-3" r="9.5" fill="#e9a062"/><circle cx="3" cy="3" r="8.5" fill="#3c3c3c" stroke="#ddd" stroke-width="1.3" stroke-dasharray="2.5 1.5"/><path d="M10 10L5 11L10 6Z" fill="#ddd"/></g><g transform="translate(714,121)"><circle r="11.5" fill="none" stroke="#bbbbbb" stroke-width="1.3"/><path d="M-9 -2L0 -7L9 -2L0 3Z" fill="#e9a062" stroke="#5b3416" stroke-width="1"/><path d="M-9 3L0 -2L9 3L0 8Z" fill="#e9a062" stroke="#5b3416" stroke-width="1"/></g><g transform="translate(749,121)"><rect x="-5" y="-11" width="8" height="8" fill="#cccccc"/><rect x="4" y="-11" width="8" height="8" fill="#cccccc"/><rect x="4" y="-1" width="8" height="9" fill="#cccccc"/><rect x="-12" y="2" width="9" height="9" fill="#e9a062"/></g><g transform="translate(784,121)"><path d="M-12 -6L-7 -9L-2 -6V8L-7 11L-12 8Z" fill="#e9a062" stroke="#5b3416" stroke-width="1"/><path d="M-12 -6L-7 -3L-2 -6M-7 -3V11" stroke="#5b3416" stroke-width="1" fill="none"/><path d="M2 -6L7 -9L12 -6V8L7 11L2 8Z" fill="#e9a062" stroke="#5b3416" stroke-width="1"/><path d="M2 -6L7 -3L12 -6M7 -3V11" stroke="#5b3416" stroke-width="1" fill="none"/><path d="M0 -13V13" stroke="#ddd" stroke-width="1.2" stroke-dasharray="2.5 1.5"/></g><g transform="translate(819,121)"><rect x="-12" y="-2" width="7" height="6" fill="#cccccc"/><rect x="-4" y="-2" width="0" height="0"/><rect x="-12" y="5" width="7" height="6" fill="#cccccc"/><rect x="-4" y="5" width="6" height="6" fill="#cccccc"/><rect x="-2.0" y="-11.0" width="2.6" height="2.6" fill="#e9a062"/><rect x="-2.0" y="-7.5" width="2.6" height="2.6" fill="#e9a062"/><rect x="-2.0" y="-4.0" width="2.6" height="2.6" fill="#e9a062"/><rect x="-2.0" y="-0.5" width="2.6" height="2.6" fill="#e9a062"/><rect x="1.5" y="-11.0" width="2.6" height="2.6" fill="#e9a062"/><rect x="1.5" y="-7.5" width="2.6" height="2.6" fill="#e9a062"/><rect x="1.5" y="-4.0" width="2.6" height="2.6" fill="#e9a062"/><rect x="1.5" y="-0.5" width="2.6" height="2.6" fill="#e9a062"/><rect x="5.0" y="-11.0" width="2.6" height="2.6" fill="#e9a062"/><rect x="5.0" y="-7.5" width="2.6" height="2.6" fill="#e9a062"/><rect x="5.0" y="-4.0" width="2.6" height="2.6" fill="#e9a062"/><rect x="5.0" y="-0.5" width="2.6" height="2.6" fill="#e9a062"/><rect x="8.5" y="-11.0" width="2.6" height="2.6" fill="#e9a062"/><rect x="8.5" y="-7.5" width="2.6" height="2.6" fill="#e9a062"/><rect x="8.5" y="-4.0" width="2.6" height="2.6" fill="#e9a062"/><rect x="8.5" y="-0.5" width="2.6" height="2.6" fill="#e9a062"/></g><g transform="translate(854,121)"><rect x="-12.0" y="-1.0" width="2.4" height="2.4" fill="#cccccc"/><rect x="-12.0" y="2.5" width="2.4" height="2.4" fill="#cccccc"/><rect x="-12.0" y="6.0" width="2.4" height="2.4" fill="#cccccc"/><rect x="-12.0" y="9.5" width="2.4" height="2.4" fill="#cccccc"/><rect x="-8.5" y="-1.0" width="2.4" height="2.4" fill="#cccccc"/><rect x="-8.5" y="2.5" width="2.4" height="2.4" fill="#cccccc"/><rect x="-8.5" y="6.0" width="2.4" height="2.4" fill="#cccccc"/><rect x="-8.5" y="9.5" width="2.4" height="2.4" fill="#cccccc"/><rect x="-5.0" y="-1.0" width="2.4" height="2.4" fill="#cccccc"/><rect x="-5.0" y="2.5" width="2.4" height="2.4" fill="#cccccc"/><rect x="-5.0" y="6.0" width="2.4" height="2.4" fill="#cccccc"/><rect x="-5.0" y="9.5" width="2.4" height="2.4" fill="#cccccc"/><rect x="-1.5" y="-1.0" width="2.4" height="2.4" fill="#cccccc"/><rect x="-1.5" y="2.5" width="2.4" height="2.4" fill="#cccccc"/><rect x="-1.5" y="6.0" width="2.4" height="2.4" fill="#cccccc"/><rect x="-1.5" y="9.5" width="2.4" height="2.4" fill="#cccccc"/><rect x="-4" y="-12" width="15" height="15" fill="#e9a062"/><path d="M3.5 -12V3M-4 -4.5H11" stroke="#5b3416" stroke-width="1"/></g><g transform="translate(889,121)"><rect x="-11" y="-2" width="14" height="14" fill="#e9a062"/><path d="M-11 -2L3 12" stroke="#5b3416" stroke-width="1.2"/><path d="M0 -4A5 5 0 0 1 2 -12M5 -12A5 5 0 0 1 7 -4" stroke="#cfcfcf" stroke-width="2" fill="none"/><path d="M-1 -11L3 -14L3 -9Z M8 -5L4 -2L4 -7Z" fill="#cfcfcf"/></g><path d="M913 105H909V137H913M933 105H937V137H933" stroke="#3cad3c" stroke-width="1.6" fill="none"/><g transform="translate(923,121)"><rect x="-9" y="-3" width="14" height="14" fill="#e9a062"/><path d="M-2 -3V11M-9 4H5" stroke="#5b3416" stroke-width="1"/><path d="M-2 -4A5 5 0 0 1 0 -12M3 -12A5 5 0 0 1 5 -4" stroke="#cfcfcf" stroke-width="2" fill="none"/><path d="M-3 -11L1 -14L1 -9Z M6 -5L2 -2L2 -7Z" fill="#cfcfcf"/></g><rect x="947" y="104" width="2" height="34" fill="#a0a0a0"/><g transform="translate(968,121)"><path d="M-2 8L6 3L13 7L5 12Z" fill="#cccccc"/><path d="M-10 -6L-5 -9L0 -6V8L-5 11L-10 8Z" fill="#e9a062" stroke="#5b3416" stroke-width="1"/><path d="M-10 -6L-5 -3L0 -6M-5 -3V11" stroke="#5b3416" stroke-width="1" fill="none"/><path d="M1 2L6 -1L11 2L6 5Z" fill="#cccccc"/></g><g transform="translate(1005,121)"><path d="M-12 -10L-6 -13.5L0 -10L-6 -6.5Z" fill="#cccccc"/><path d="M0 -3L6 -6.5L12 -3L6 0.5Z" fill="#cccccc"/><path d="M-12 3L-6 -0.5L0 3L-6 6.5Z" fill="#cccccc"/><path d="M0 10L6 6.5L12 10L6 13.5Z" fill="#cccccc"/><path d="M-6 4L0 0.5L6 4L0 7.5Z" fill="#e9a062"/><path d="M-3 -7L3 -2" stroke="#ccc" stroke-width="0.8" stroke-dasharray="1 1"/></g><g transform="translate(1040,121)"><path d="M0 -13L12 -6V7L0 13L-12 7V-6Z" fill="#e9a062" stroke="#5b3416" stroke-width="1.4"/><path d="M-12 -6L-2 -1V13M12 -6L2 -1V13M-2 -1H2" stroke="#cccccc" stroke-width="2" fill="none"/><path d="M-9 -7L0 -11L9 -7" stroke="#5b3416" stroke-width="1" fill="none"/></g><g transform="translate(1075,121)"><rect x="-10" y="-2" width="12" height="12" fill="#cccccc"/><path d="M-4 -2V10M-10 4H2" stroke="#555" stroke-width="0.8"/><path d="M-1 -12H12V4H3V-1H-1Z" fill="#e9a062"/><path d="M5 -12V-2M-1 -5H12" stroke="#5b3416" stroke-width="1"/><rect x="-1" y="-4" width="4" height="4" fill="#ddd" stroke="#5b3416" stroke-width="1"/><rect x="-12" y="0" width="3" height="3" fill="#333" stroke="#ddd" stroke-width="0.8"/><rect x="-12" y="8" width="3" height="3" fill="#333" stroke="#ddd" stroke-width="0.8"/><rect x="-5" y="8" width="3" height="3" fill="#333" stroke="#ddd" stroke-width="0.8"/><rect x="-7" y="-2" width="3" height="3" fill="#333" stroke="#ddd" stroke-width="0.8"/></g><g transform="translate(1110,121)"><circle r="11.5" fill="#e9a062" stroke="#5b3416" stroke-width="1.5"/><circle r="7.5" fill="none" stroke="#5b3416" stroke-width="1"/><path d="M-11 0H11M0 -11V11M-8 -8L8 8M8 -8L-8 8" stroke="#5b3416" stroke-width="1"/></g><g transform="translate(1145,121)"><rect x="0" y="-12" width="12" height="12" fill="#cccccc"/><path d="M0 0L12 -12" stroke="#666" stroke-width="1"/><rect x="-11" y="-3" width="14" height="15" fill="#e9a062"/><path d="M-11 -3L3 12" stroke="#5b3416" stroke-width="1.2"/></g><g transform="translate(1180,121)"><path d="M-6 4L2 -1L12 4L4 9Z" fill="#cccccc"/><path d="M-12 2L-4 -2L4 2L-4 6Z" fill="#cccccc"/><path d="M-12 -3L-4 -7L4 -3L-4 1Z" fill="#e9a062" stroke="#5b3416" stroke-width="1"/><path d="M-12 -3V0L-4 4L4 0V-3" fill="#e9a062" stroke="#5b3416" stroke-width="0.8"/></g><g transform="translate(1216,121)"><rect x="-10" y="-10" width="20" height="20" fill="none" stroke="#cfcfcf" stroke-width="1.2"/><rect x="-12" y="-12" width="4" height="4" fill="#333" stroke="#ddd" stroke-width="1"/><rect x="8" y="-12" width="4" height="4" fill="#333" stroke="#ddd" stroke-width="1"/><rect x="-12" y="8" width="4" height="4" fill="#333" stroke="#ddd" stroke-width="1"/><rect x="8" y="8" width="4" height="4" fill="#333" stroke="#ddd" stroke-width="1"/><path d="M-7 -7L-3 -3M7 -7L3 -3M-7 7L-3 3M7 7L3 3" stroke="#e9a062" stroke-width="1"/><rect x="-2.5" y="-2.5" width="5" height="5" fill="none" stroke="#e9a062" stroke-width="1.3"/></g><g transform="translate(1250,121)"><rect x="-12" y="-1" width="3" height="3" fill="#cccccc"/><rect x="-12" y="3" width="3" height="3" fill="#cccccc"/><rect x="-12" y="7" width="3" height="3" fill="#cccccc"/><rect x="-8" y="-1" width="3" height="3" fill="#cccccc"/><rect x="-8" y="3" width="3" height="3" fill="#cccccc"/><rect x="-8" y="7" width="3" height="3" fill="#cccccc"/><rect x="-4" y="-1" width="3" height="3" fill="#cccccc"/><rect x="-4" y="3" width="3" height="3" fill="#cccccc"/><rect x="-4" y="7" width="3" height="3" fill="#cccccc"/><rect x="0" y="-1" width="3" height="3" fill="#cccccc"/><rect x="0" y="3" width="3" height="3" fill="#cccccc"/><rect x="0" y="7" width="3" height="3" fill="#cccccc"/><circle cx="4" cy="-5" r="8" fill="#e9a062" stroke="#5b3416" stroke-width="1.3"/><path d="M-4 -5H12M4 -13V3M-2 -10H10M-2 0H10" stroke="#5b3416" stroke-width="1" fill="none"/></g><rect x="1274" y="104" width="2" height="34" fill="#a0a0a0"/><g transform="translate(1297,121)"><path d="M-9 -8L2 -11M-9 -8L-9 11" stroke="#e9a062" stroke-width="1"/><rect x="-10.5" y="-9.5" width="3" height="3" fill="none" stroke="#e9a062" stroke-width="1"/><rect x="1" y="-12.5" width="3" height="3" fill="none" stroke="#ddd" stroke-width="1"/><rect x="-10.5" y="9" width="3" height="3" fill="none" stroke="#ddd" stroke-width="1"/><path d="M-7 9L8 -6L11 -3L-4 10Z" fill="#cccccc"/><path d="M8 -6L12 -10L14 -8L11 -3Z" fill="#bbb"/></g><g transform="translate(1332,121)"><path d="M-8 -9V9M8 -9V9M-8 -9H8M-8 9H8" stroke="#ddd" stroke-width="0.8" fill="none"/><path d="M0 -9V9" stroke="#e9a062" stroke-width="1.3"/><rect x="-9.5" y="-10.5" width="3" height="3" fill="none" stroke="#ddd" stroke-width="1"/><rect x="6.5" y="-10.5" width="3" height="3" fill="none" stroke="#ddd" stroke-width="1"/><rect x="-9.5" y="7.5" width="3" height="3" fill="none" stroke="#ddd" stroke-width="1"/><rect x="6.5" y="7.5" width="3" height="3" fill="none" stroke="#ddd" stroke-width="1"/><rect x="-1.5" y="-10.5" width="3" height="3" fill="none" stroke="#e9a062" stroke-width="1"/><rect x="-1.5" y="7.5" width="3" height="3" fill="none" stroke="#e9a062" stroke-width="1"/><rect x="-1.5" y="-1.5" width="3" height="3" fill="none" stroke="#e9a062" stroke-width="1"/></g><g transform="translate(1367,121)"><path d="M-9 -9H-1M-9 -9V-1M-9 -1H-1" stroke="#ddd" stroke-width="0.8" stroke-dasharray="1.5 1" fill="none"/><rect x="-10.5" y="-10.5" width="3" height="3" fill="none" stroke="#ddd" stroke-width="1"/><rect x="-2.5" y="-10.5" width="3" height="3" fill="none" stroke="#ddd" stroke-width="1"/><rect x="-10.5" y="-2.5" width="3" height="3" fill="none" stroke="#ddd" stroke-width="1"/><rect x="-2.5" y="-2.5" width="3" height="3" fill="none" stroke="#ddd" stroke-width="1"/><rect x="-11" y="8" width="3" height="3" fill="#e9a062"/><path d="M-4 10L9 -4L12 -1L-1 13L-5 14Z" fill="#cccccc"/></g><rect x="1391" y="104" width="2" height="34" fill="#a0a0a0"/><g transform="translate(1415,121)"><rect x="-11" y="-11" width="21" height="21" fill="#62b88c"/><rect x="1" y="3" width="9" height="9" fill="#e8e8e8"/><rect x="1" y="3" width="3" height="3" fill="#222"/><rect x="7" y="3" width="3" height="3" fill="#222"/><rect x="4" y="6" width="3" height="3" fill="#222"/><rect x="1" y="9" width="3" height="3" fill="#222"/><rect x="7" y="9" width="3" height="3" fill="#222"/></g><g transform="translate(1450,121)"><path d="M-11 -9Q0 -4 11 -9V10Q0 14 -11 10Z" fill="#62b88c"/><rect x="2" y="3" width="9" height="9" fill="#e8e8e8"/><rect x="2" y="3" width="3" height="3" fill="#222"/><rect x="8" y="3" width="3" height="3" fill="#222"/><rect x="5" y="6" width="3" height="3" fill="#222"/><rect x="2" y="9" width="3" height="3" fill="#222"/><rect x="8" y="9" width="3" height="3" fill="#222"/></g><g transform="translate(1485,121)"><path d="M-12 -6Q0 1 12 -6A12 12 0 0 1 -12 -6Z" fill="#62b88c"/><path d="M-12 -6A12 12 0 0 0 6 10" fill="#62b88c"/><rect x="2" y="3" width="9" height="9" fill="#e8e8e8"/><rect x="2" y="3" width="3" height="3" fill="#222"/><rect x="8" y="3" width="3" height="3" fill="#222"/><rect x="5" y="6" width="3" height="3" fill="#222"/><rect x="2" y="9" width="3" height="3" fill="#222"/><rect x="8" y="9" width="3" height="3" fill="#222"/></g><g transform="translate(1520,121)"><path d="M0 -12L11 -6V6L0 12L-11 6V-6Z" fill="#62b88c"/><path d="M-11 -6L0 0L11 -6M0 0V12" stroke="#444" stroke-width="1.3" fill="none"/><rect x="2" y="3" width="9" height="9" fill="#e8e8e8"/><rect x="2" y="3" width="3" height="3" fill="#222"/><rect x="8" y="3" width="3" height="3" fill="#222"/><rect x="5" y="6" width="3" height="3" fill="#222"/><rect x="2" y="9" width="3" height="3" fill="#222"/><rect x="8" y="9" width="3" height="3" fill="#222"/></g><g transform="translate(1556,121)"><path d="M-11 8Q-10 -2 -2 0Q6 2 4 -12" stroke="#62b88c" stroke-width="3.5" fill="none"/><path d="M-11 8Q-6 4 -1 6Q8 6 8 -8" stroke="#62b88c" stroke-width="2" fill="none"/><rect x="3" y="3" width="9" height="9" fill="#e8e8e8"/><rect x="3" y="3" width="3" height="3" fill="#222"/><rect x="9" y="3" width="3" height="3" fill="#222"/><rect x="6" y="6" width="3" height="3" fill="#222"/><rect x="3" y="9" width="3" height="3" fill="#222"/><rect x="9" y="9" width="3" height="3" fill="#222"/></g><g transform="translate(1590,121)"><rect x="-11" y="-12" width="22" height="24" fill="#62b88c"/><rect x="-11" y="-12" width="22" height="5" fill="#cccccc"/><rect x="-9" y="-11" width="2" height="2" fill="#333"/><rect x="-6" y="-11" width="2" height="2" fill="#333"/><rect x="-3" y="-11" width="2" height="2" fill="#333"/><rect x="-8" y="-5" width="15" height="15" fill="#333"/><rect x="-8" y="-5" width="5" height="5" fill="#e8e8e8"/><rect x="-8" y="5" width="5" height="5" fill="#e8e8e8"/><rect x="-3" y="0" width="5" height="5" fill="#e8e8e8"/><rect x="2" y="-5" width="5" height="5" fill="#e8e8e8"/><rect x="2" y="5" width="5" height="5" fill="#e8e8e8"/></g><g transform="translate(1624,121)"><path d="M-12 -4L-6 0L-12 4M12 -4L6 0L12 4" stroke="#62b88c" stroke-width="2.5" fill="none"/><path d="M-12 0H12M-8 7L0 2L8 7" stroke="#62b88c" stroke-width="3" fill="none"/><rect x="-4" y="-12" width="9" height="9" fill="#e8e8e8"/><rect x="-4" y="-12" width="3" height="3" fill="#222"/><rect x="2" y="-12" width="3" height="3" fill="#222"/><rect x="-1" y="-9" width="3" height="3" fill="#222"/><rect x="-4" y="-6" width="3" height="3" fill="#222"/><rect x="2" y="-6" width="3" height="3" fill="#222"/></g><g transform="translate(1660,121)"><path d="M-10 10L10 -10M-6 -10L6 4" stroke="#cccccc" stroke-width="2.5"/><path d="M-9 -8Q-13 2 -4 8Q0 12 10 11" stroke="#bbb" stroke-width="1" fill="none"/><circle cx="-8" cy="-9" r="2" fill="none" stroke="#ddd" stroke-width="1"/></g><g fill="#8a8a8a"><rect x="3.0" y="152" width="1" height="1"/><rect x="3.0" y="155" width="1" height="1"/><rect x="6.2" y="152" width="1" height="1"/><rect x="6.2" y="155" width="1" height="1"/><rect x="9.4" y="152" width="1" height="1"/><rect x="9.4" y="155" width="1" height="1"/><rect x="12.6" y="152" width="1" height="1"/><rect x="12.6" y="155" width="1" height="1"/><rect x="15.8" y="152" width="1" height="1"/><rect x="15.8" y="155" width="1" height="1"/><rect x="19.0" y="152" width="1" height="1"/><rect x="19.0" y="155" width="1" height="1"/><rect x="22.2" y="152" width="1" height="1"/><rect x="22.2" y="155" width="1" height="1"/><rect x="25.4" y="152" width="1" height="1"/><rect x="25.4" y="155" width="1" height="1"/><rect x="28.6" y="152" width="1" height="1"/><rect x="28.6" y="155" width="1" height="1"/><rect x="31.8" y="152" width="1" height="1"/><rect x="31.8" y="155" width="1" height="1"/><rect x="35.0" y="152" width="1" height="1"/><rect x="35.0" y="155" width="1" height="1"/><rect x="38.2" y="152" width="1" height="1"/><rect x="38.2" y="155" width="1" height="1"/></g><g transform="translate(22,178) scale(1.25)"><path d="M-5 -9V7L-1 3L2 9L5 8L2 2H7Z" fill="#cccccc" stroke="#2a3f4e" stroke-width="0.8"/></g><g transform="translate(21,215)"><ellipse cx="-2.5" cy="-1.5" rx="11" ry="7" transform="rotate(-35 -2.5 -1.5)" fill="none" stroke="#4ea6b0" stroke-width="2.6" stroke-dasharray="4 2.2"/><path d="M0 -6V11L4 7.5L7 14L10 12.5L7 6.5H12Z" fill="#cccccc" stroke="#333" stroke-width="0.9"/></g><g transform="translate(21,253)"><ellipse cx="-3" cy="3" rx="8.5" ry="11.5" transform="rotate(-25 -3 3)" fill="none" stroke="#4ea6b0" stroke-width="2.6" stroke-dasharray="4 2.2"/><path d="M13 -13L1 0Q-4 2 -8 8Q-1 9 3 4L15 -10Z" fill="#cccccc" stroke="#333" stroke-width="0.8"/></g><g transform="translate(22,290)"><rect x="-6.5" y="-6.5" width="13" height="13" fill="#cccccc"/><path d="M0 -13L-4 -9H4ZM0 13L-4 9H4ZM-13 0L-9 -4V4ZM13 0L9 -4V4Z" fill="#4ea6b0"/></g><g transform="translate(22,326)"><path d="M6 12A13 13 0 1 1 12 4" fill="none" stroke="#4ea6b0" stroke-width="2"/><path d="M9 2L15 2L12 7Z" fill="#4ea6b0"/><path d="M0 -8L8 0L0 8L-8 0Z" fill="#cccccc"/></g><g transform="translate(22,363)"><rect x="-12" y="-12" width="24" height="24" fill="none" stroke="#4ea6b0" stroke-width="1.3" stroke-dasharray="3 2"/><rect x="-12" y="1" width="11" height="11" fill="#cccccc"/><path d="M0 -3H4V1" stroke="#cccccc" stroke-width="1.3" fill="none"/></g><rect x="4" y="461" width="36" height="2" fill="#9a9a9a"/><g transform="translate(22,486)"><rect x="-13.5" y="-13.5" width="27" height="27" fill="#cfcfcf"/><rect x="-11" y="-11" width="22" height="22" fill="none" stroke="#444" stroke-width="1"/><path d="M0 -6L4 -3L0 0L-4 -3ZM-5 -1L-1 2L-5 5L-9 2ZM5 -1L9 2L5 5L1 2ZM0 3L4 6L0 9L-4 6Z" fill="#444"/></g><g transform="translate(22,523)"><rect x="-12.5" y="-12.5" width="11" height="11" fill="none" stroke="#cfcfcf" stroke-width="1"/><path d="M-7 -10.5V-3.5M-10.5 -7H-3.5" stroke="#cfcfcf" stroke-width="1"/><rect x="1" y="-13" width="12" height="12" fill="#cfcfcf"/><path d="M7 -10L10 -7L7 -4L4 -7Z" fill="#444"/><rect x="-12.5" y="1.5" width="11" height="11" fill="none" stroke="#cfcfcf" stroke-width="1"/><path d="M-7 3.5V10.5M-10.5 7H-3.5" stroke="#cfcfcf" stroke-width="1"/><rect x="1.5" y="1.5" width="11" height="11" fill="none" stroke="#cfcfcf" stroke-width="1"/><path d="M7 3.5V10.5M3.5 7H10.5" stroke="#cfcfcf" stroke-width="1"/></g><g transform="translate(22,560)"><rect x="-12.5" y="-13.5" width="11" height="27" fill="none" stroke="#cfcfcf" stroke-width="1"/><path d="M-7 -4V4M-11 0H-3" stroke="#cfcfcf" stroke-width="1"/><rect x="1" y="-14" width="12" height="28" fill="#cfcfcf"/><path d="M7 -3L10 0L7 3L4 0Z" fill="#444"/></g><rect x="4" y="579" width="36" height="36" fill="#5285a6"/><g transform="translate(22,597)"><rect x="-13.5" y="-13.5" width="27" height="27" fill="none" stroke="#e0e0e0" stroke-width="1"/><rect x="-12" y="-12" width="24" height="24" fill="none" stroke="#2e4a5e" stroke-width="1"/><path d="M-8 -9V9M-8 -4H-3M-8 2H-3M-8 8H-3M-6 -9H8M-1 -4H11M-1 2H10M-1 8H10" stroke="#e0e0e0" stroke-width="1"/><rect x="-10" y="-11" width="3" height="3" fill="#e0e0e0"/><rect x="-4" y="-6" width="3" height="3" fill="#e0e0e0"/><rect x="-4" y="0" width="3" height="3" fill="#e0e0e0"/><rect x="-4" y="6" width="3" height="3" fill="#e0e0e0"/></g><rect x="4" y="620" width="36" height="2" fill="#9a9a9a"/><g transform="translate(22,645)"><circle cx="-2" cy="-2" r="7" fill="none" stroke="#cccccc" stroke-width="2"/><path d="M3 3L9 9" stroke="#cccccc" stroke-width="2.5"/></g><g transform="translate(6,889)"><path d="M2 2L6 0H30V26H2Z" fill="#4ea9cf"/><path d="M2 2L6 0V26H2Z" fill="#6cc4e8"/><path d="M2 22H30V32H6L2 30Z" fill="#2f7390"/><text x="17" y="19" font-family="Liberation Sans" font-size="17" font-weight="bold" fill="#fff" text-anchor="middle">M</text><text x="17" y="30" font-family="Liberation Sans" font-size="6.5" font-weight="bold" fill="#fff" text-anchor="middle">AYA</text></g><g transform="translate(62,202)" opacity="0.5"><path d="M-6 -7H6M-6 7H6M-7 -6V6M7 -6V6" stroke="#999" stroke-width="1.5"/><path d="M-3 -3L0 0L-3 3M3 -3L0 0L3 3" stroke="#999" stroke-width="1" fill="none"/></g><g transform="translate(93,224)"><rect x="-7" y="-3" width="9" height="6" fill="#bdbdbd"/><path d="M3 0L7 -4V4Z" fill="#bdbdbd"/></g><g transform="translate(93,244)"><rect x="-7" y="-3" width="9" height="6" fill="#bdbdbd"/><path d="M3 0L7 -4V4Z" fill="#bdbdbd"/></g><g transform="translate(93,264)"><rect x="-7" y="-3" width="9" height="6" fill="#bdbdbd"/><path d="M3 0L7 -4V4Z" fill="#bdbdbd"/></g><g transform="translate(93,284)"><rect x="-7" y="-3" width="9" height="6" fill="#bdbdbd"/><path d="M3 0L7 -4V4Z" fill="#bdbdbd"/></g><g transform="translate(93,303)"><path d="M0 -5L3 -2.5L0 0L-3 -2.5ZM-4 -1L-1 1.5L-4 4L-7 1.5ZM4 -1L7 1.5L4 4L1 1.5ZM0 2L3 4.5L0 7L-3 4.5Z" fill="#cfcfcf"/></g><g transform="translate(93,324)"><circle r="7" fill="none" stroke="#c8c8c8" stroke-width="1.3"/><circle cx="-1.5" cy="2" r="2.8" fill="#d8d8d8"/><rect x="0" y="-4" width="4" height="7" fill="#4ea6b0"/></g><g transform="translate(93,344)"><circle r="7" fill="none" stroke="#c8c8c8" stroke-width="1.3"/><circle cx="-1.5" cy="2" r="2.8" fill="#d8d8d8"/><rect x="0" y="-4" width="4" height="7" fill="#4ea6b0"/></g><path d="M291.5 200.0H300.5L296 206.0Z" fill="#dddddd"/><path d="M296 222H305L300.5 217Z" fill="#cccccc"/><path d="M296 896H305L300.5 901Z" fill="#cccccc"/><path d="M59 907V917L54 912Z" fill="#cccccc"/><path d="M285 907V917L290 912Z" fill="#cccccc"/><g fill="#777"><rect x="135" y="919" width="1" height="1"/><rect x="138" y="919" width="1" height="1"/><rect x="141" y="919" width="1" height="1"/><rect x="144" y="919" width="1" height="1"/><rect x="147" y="919" width="1" height="1"/><rect x="150" y="919" width="1" height="1"/><rect x="153" y="919" width="1" height="1"/><rect x="156" y="919" width="1" height="1"/><rect x="159" y="919" width="1" height="1"/><rect x="162" y="919" width="1" height="1"/><rect x="165" y="919" width="1" height="1"/><rect x="168" y="919" width="1" height="1"/><rect x="171" y="919" width="1" height="1"/><rect x="174" y="919" width="1" height="1"/><rect x="177" y="919" width="1" height="1"/><rect x="180" y="919" width="1" height="1"/><rect x="183" y="919" width="1" height="1"/><rect x="186" y="919" width="1" height="1"/><rect x="189" y="919" width="1" height="1"/><rect x="192" y="919" width="1" height="1"/><rect x="195" y="919" width="1" height="1"/><rect x="198" y="919" width="1" height="1"/><rect x="201" y="919" width="1" height="1"/><rect x="204" y="919" width="1" height="1"/><rect x="207" y="919" width="1" height="1"/><rect x="210" y="919" width="1" height="1"/><rect x="213" y="919" width="1" height="1"/><rect x="216" y="919" width="1" height="1"/><rect x="219" y="919" width="1" height="1"/></g><rect x="319.5" y="173" width="1" height="16" fill="#6a6a6a"/><rect x="318.5" y="175.0" width="3" height="12" rx="1.5" fill="#8c8c8c"/><g transform="translate(335,181)"><rect x="-8" y="-3" width="10" height="7" fill="#cccccc"/><path d="M3 0.5L8 -4V5Z" fill="#cccccc"/></g><g transform="translate(354,181)"><rect x="-6" y="-6" width="10" height="7" fill="#cccccc"/><path d="M5 -2.5L9 -6V1Z" fill="#cccccc"/><rect x="-8" y="0" width="7" height="6" fill="#4ea6b0"/><path d="M-7 0V-2A2.5 2.5 0 0 1 -2 -2V0" stroke="#4ea6b0" stroke-width="1.3" fill="none"/></g><g transform="translate(373,181)"><rect x="-6" y="-6" width="10" height="7" fill="#cccccc"/><path d="M5 -2.5L9 -6V1Z" fill="#cccccc"/><circle cx="-4" cy="2" r="4" fill="#4ea6b0"/><circle cx="-4" cy="2" r="1.5" fill="#333"/></g><g transform="translate(393,181)"><path d="M-3 -7H4V7L0.5 4L-3 7Z" fill="#cccccc"/></g><g transform="translate(412,181)"><path d="M-4 4L5 -7V2L-4 8Z" fill="#4ea6b0"/><path d="M-8 8L-2 4M-6 6L4 6M-4 8L6 8" stroke="#ddd" stroke-width="1"/></g><g transform="translate(432,181)"><path d="M-8 -3H0M-4 -7V1M-8 -3L-6 -5M-8 -3L-6 -1M-4 -7L-6 -5M-4 -7L-2 -5" stroke="#ddd" stroke-width="1.2" fill="none"/><circle cx="3" cy="3" r="3.5" fill="none" stroke="#4ea6b0" stroke-width="1.5"/><path d="M0 6L-3 9" stroke="#4ea6b0" stroke-width="1.5"/></g><g transform="translate(450,181)"><path d="M-8 -9H-10V9H-8M8 -9H10V9H8" stroke="#3cad3c" stroke-width="1.3" fill="none"/><path d="M-6 7L5 -5L7 -3L-4 9L-7 10Z" fill="#4ea6b0"/></g><rect x="463.5" y="173" width="1" height="16" fill="#6a6a6a"/><rect x="462.5" y="175.0" width="3" height="12" rx="1.5" fill="#8c8c8c"/><g transform="translate(480,181)"><rect x="-11" y="-10" width="22" height="20" fill="#4c7a99"/><rect x="-7" y="-7" width="14" height="14" fill="none" stroke="#e8e8e8" stroke-width="1.3"/><path d="M-2.3 -7V7M2.3 -7V7M-7 -2.3H7M-7 2.3H7" stroke="#e8e8e8" stroke-width="1.2"/></g><g transform="translate(499,181)"><rect x="-8" y="-6" width="16" height="12" fill="none" stroke="#cccccc" stroke-width="1.3"/><path d="M-8 -3.5H8M-8 3.5H8" stroke="#cccccc" stroke-width="1"/><path d="M-6 -5H-5M-3 -5H-2M0 -5H1M3 -5H4M-6 5H-5M-3 5H-2M0 5H1M3 5H4" stroke="#cccccc" stroke-width="1"/></g><g transform="translate(518,181)"><rect x="-8" y="-6" width="16" height="12" fill="none" stroke="#cccccc" stroke-width="1.3"/><circle r="3" fill="#4ea6b0"/></g><g transform="translate(536,181)"><rect x="-9" y="-9" width="18" height="18" fill="#3a3a3a"/><circle r="3.5" fill="#4a4a4a"/></g><g transform="translate(556,181)"><rect x="-8" y="-6" width="16" height="12" fill="none" stroke="#cccccc" stroke-width="1.3"/><path d="M-4 -2V2M4 -2V2M-2 0H2" stroke="#4ea6b0" stroke-width="1" stroke-dasharray="1 1"/></g><g transform="translate(575,181)"><rect x="-8" y="-6" width="16" height="12" fill="none" stroke="#cccccc" stroke-width="1.3"/><path d="M-6 4L-2 -2L2 4Z" fill="#4ea6b0"/><circle cx="3" cy="-1" r="3" fill="#4ea6b0"/></g><g transform="translate(594,181)"><rect x="-8" y="-6" width="16" height="12" fill="none" stroke="#cccccc" stroke-width="1.3"/><path d="M-4 -3H4M0 -3V4" stroke="#4ea6b0" stroke-width="2"/></g><rect x="608.5" y="173" width="1" height="16" fill="#6a6a6a"/><rect x="607.5" y="175.0" width="3" height="12" rx="1.5" fill="#8c8c8c"/><g transform="translate(624,181)"><path d="M0 -8L8 -4V5L0 9L-8 5V-4Z" fill="none" stroke="#cccccc" stroke-width="1.1"/><path d="M-8 -4L0 0L8 -4M0 0V9" stroke="#cccccc" stroke-width="1.1" fill="none"/></g><g transform="translate(643,181)"><rect x="-10" y="-10" width="20" height="20" fill="#4c7a99"/><path d="M0 -8L8 -4V5L0 9L-8 5V-4Z" fill="#7ed0dc" stroke="#203a40" stroke-width="1"/><path d="M-8 -4L0 0L8 -4M0 0V9" stroke="#203a40" stroke-width="1" fill="none"/><path d="M0 -8L8 -4L0 0L-8 -4Z" fill="#9ee0ea"/></g><g transform="translate(662,181)"><circle r="7.5" fill="#cccccc"/><path d="M1 -7.5A7.5 7.5 0 0 1 1 7.5Z" fill="#555"/><path d="M2 -5h2M4 -3h2M2 -1h2M4 1h2M2 3h2M4 5h1" stroke="#cccccc" stroke-width="1.3"/></g><g transform="translate(681,181)"><path d="M0 -8L8 -4V5L0 9L-8 5V-4Z" fill="none" stroke="#4ea6b0" stroke-width="1.2"/><path d="M-8 -4L0 0L8 -4M0 0V9M-4 -6L4 -2M4 -6L-4 -2" stroke="#cccccc" stroke-width="0.9" fill="none"/></g><g transform="translate(700,181)"><circle r="8" fill="#ddd"/><rect x="-8" y="-8" width="2" height="2" fill="#444"/><rect x="-8" y="-4" width="2" height="2" fill="#444"/><rect x="-8" y="0" width="2" height="2" fill="#444"/><rect x="-8" y="4" width="2" height="2" fill="#444"/><rect x="-6" y="-6" width="2" height="2" fill="#444"/><rect x="-6" y="-2" width="2" height="2" fill="#444"/><rect x="-6" y="2" width="2" height="2" fill="#444"/><rect x="-6" y="6" width="2" height="2" fill="#444"/><rect x="-4" y="-8" width="2" height="2" fill="#444"/><rect x="-4" y="-4" width="2" height="2" fill="#444"/><rect x="-4" y="0" width="2" height="2" fill="#444"/><rect x="-4" y="4" width="2" height="2" fill="#444"/><rect x="-2" y="-6" width="2" height="2" fill="#444"/><rect x="-2" y="-2" width="2" height="2" fill="#444"/><rect x="-2" y="2" width="2" height="2" fill="#444"/><rect x="-2" y="6" width="2" height="2" fill="#444"/><rect x="0" y="-8" width="2" height="2" fill="#444"/><rect x="0" y="-4" width="2" height="2" fill="#444"/><rect x="0" y="0" width="2" height="2" fill="#444"/><rect x="0" y="4" width="2" height="2" fill="#444"/><rect x="2" y="-6" width="2" height="2" fill="#444"/><rect x="2" y="-2" width="2" height="2" fill="#444"/><rect x="2" y="2" width="2" height="2" fill="#444"/><rect x="2" y="6" width="2" height="2" fill="#444"/><rect x="4" y="-8" width="2" height="2" fill="#444"/><rect x="4" y="-4" width="2" height="2" fill="#444"/><rect x="4" y="0" width="2" height="2" fill="#444"/><rect x="4" y="4" width="2" height="2" fill="#444"/><rect x="6" y="-6" width="2" height="2" fill="#444"/><rect x="6" y="-2" width="2" height="2" fill="#444"/><rect x="6" y="2" width="2" height="2" fill="#444"/><rect x="6" y="6" width="2" height="2" fill="#444"/><circle r="8" fill="none" stroke="#444" stroke-width="1"/></g><g transform="translate(719,181)"><circle cx="0" cy="-1" r="4.5" fill="#e0e0e0"/><rect x="-2" y="3" width="4" height="4" fill="#e0e0e0"/><path d="M-8 -3h2M6 -3h2M-6 -8l1.5 1.5M6 -8l-1.5 1.5M0 -10v2" stroke="#e0e0e0" stroke-width="1"/></g><g transform="translate(739,181)"><circle cx="3" cy="-1" r="6" fill="#4ea6b0"/><path d="M-9 7L-2 2L1 6L-6 10Z" fill="#cccccc"/></g><rect x="751.5" y="173" width="1" height="16" fill="#6a6a6a"/><rect x="750.5" y="175.0" width="3" height="12" rx="1.5" fill="#8c8c8c"/><g transform="translate(768,181)"><circle cx="0" cy="-3" r="6" fill="#cfcfcf"/><path d="M-8 2Q0 8 8 2M-8 5Q0 11 8 5M-6 8Q0 12 6 8" stroke="#4ea6b0" stroke-width="1" fill="none"/></g><g transform="translate(787,181)"><circle cx="3" cy="-3" r="5.5" fill="#cfcfcf"/><path d="M-6 6L1 -1" stroke="#777" stroke-width="6"/></g><g transform="translate(806,181)"><path d="M1 -8A8 8 0 0 0 1 8" stroke="#4ea6b0" stroke-width="2.5" fill="none"/><path d="M2 -8A8 8 0 0 1 2 8" stroke="#ddd" stroke-width="2" stroke-dasharray="2 1.5" fill="none"/></g><g transform="translate(825,181)"><rect x="-10" y="-10" width="20" height="20" fill="#393939"/><rect x="-4" y="-3" width="8" height="10" fill="#4a5a5a"/></g><rect x="839.5" y="173" width="1" height="16" fill="#6a6a6a"/><rect x="838.5" y="175.0" width="3" height="12" rx="1.5" fill="#8c8c8c"/><g transform="translate(856,181)"><rect x="-8" y="-8" width="10" height="10" fill="none" stroke="#4ea6b0" stroke-width="1.2" stroke-dasharray="2 1.5"/><path d="M0 -2V10L3 7L5 11L7 10L5 6H8Z" fill="#cccccc"/></g><rect x="868.5" y="173" width="1" height="16" fill="#6a6a6a"/><rect x="867.5" y="175.0" width="3" height="12" rx="1.5" fill="#8c8c8c"/><g transform="translate(884,181)"><rect x="-2" y="-8" width="10" height="10" fill="none" stroke="#cccccc" stroke-width="1.5"/><rect x="-8" y="-2" width="10" height="10" fill="#cccccc"/><rect x="-2" y="-2" width="4" height="4" fill="#555"/></g><g transform="translate(903,181)"><rect x="-2" y="-8" width="10" height="10" fill="none" stroke="#cccccc" stroke-width="1.5"/><rect x="-8" y="-2" width="10" height="10" fill="#cccccc"/></g><g transform="translate(922,181)"><rect x="-8" y="-8" width="16" height="16" fill="none" stroke="#cccccc" stroke-width="1.5"/><path d="M-4 -4L4 4" stroke="#cccccc" stroke-width="2"/><circle cx="-4" cy="-4" r="2" fill="#cccccc"/></g><rect x="937.5" y="173" width="1" height="16" fill="#6a6a6a"/><rect x="936.5" y="175.0" width="3" height="12" rx="1.5" fill="#8c8c8c"/><g transform="translate(953,181)"><circle r="7" fill="none" stroke="#ddd" stroke-width="3"/><path d="M-3 -7L2 -2M7 -2L1 2M2 7L-2 1M-7 2L-1 -2" stroke="#444" stroke-width="1.3"/></g><g transform="translate(1015,181)"><path d="M-6 -7H2V7H-6Z" fill="#ddd"/><path d="M-2 -4A4 4 0 0 1 -2 4Z" fill="#444"/><path d="M3 -3L6 0L3 3" fill="#ddd"/></g><g transform="translate(1076,181)"><rect x="-9" y="-10" width="18" height="20" fill="#4c7a99"/><circle r="6.5" fill="#4ea6b0" stroke="#1e4e5a" stroke-width="1"/><text x="0" y="2.5" font-family="Liberation Sans" font-size="5.5" font-weight="bold" fill="#1e4e5a" text-anchor="middle">ON</text></g><rect x="1265" y="172" width="1" height="17" fill="#444"/><path d="M1271.5 178.0H1280.5L1276 184.0Z" fill="#dddddd"/><path d="M1803 590L1809 586V594Z" fill="#b8dde0"/><rect x="1810" y="586" width="5" height="8" fill="#4ea6b0"/><g fill="#888"><rect x="1730" y="531" width="1" height="1"/><rect x="1733" y="531" width="1" height="1"/><rect x="1736" y="531" width="1" height="1"/><rect x="1739" y="531" width="1" height="1"/><rect x="1742" y="531" width="1" height="1"/><rect x="1745" y="531" width="1" height="1"/><rect x="1748" y="531" width="1" height="1"/><rect x="1751" y="531" width="1" height="1"/><rect x="1754" y="531" width="1" height="1"/><rect x="1757" y="531" width="1" height="1"/><rect x="1760" y="531" width="1" height="1"/><rect x="1763" y="531" width="1" height="1"/><rect x="1766" y="531" width="1" height="1"/><rect x="1769" y="531" width="1" height="1"/><rect x="1772" y="531" width="1" height="1"/><rect x="1775" y="531" width="1" height="1"/><rect x="1778" y="531" width="1" height="1"/><rect x="1781" y="531" width="1" height="1"/><rect x="1784" y="531" width="1" height="1"/><rect x="1787" y="531" width="1" height="1"/><rect x="1790" y="531" width="1" height="1"/><rect x="1793" y="531" width="1" height="1"/><rect x="1796" y="531" width="1" height="1"/><rect x="1799" y="531" width="1" height="1"/><rect x="1802" y="531" width="1" height="1"/><rect x="1805" y="531" width="1" height="1"/><rect x="1808" y="531" width="1" height="1"/><rect x="1811" y="531" width="1" height="1"/><rect x="1814" y="531" width="1" height="1"/></g><path d="M1659 907V917L1654 912Z" fill="#cccccc"/><g fill="#cfcfcf"><rect x="1730" y="940" width="2.2" height="13.5"/><path d="M1739 941V952L1733 946.5ZM1746 941V952L1740 946.5Z"/><rect x="1754.5" y="940" width="2.2" height="13.5"/><path d="M1767 940.5V952.5L1758 946.5Z"/></g><rect x="1776.5" y="939" width="2.4" height="15" fill="#d8925a"/><path d="M1790 940.5V952.5L1781 946.5Z" fill="#cfcfcf"/><path d="M1815 939V955L1800.5 947Z" fill="#cfcfcf"/><rect x="1321.5" y="977" width="1" height="22" fill="#6a6a6a"/><rect x="1320.5" y="982.0" width="3" height="12" rx="1.5" fill="#8c8c8c"/><rect x="1364.5" y="977" width="1" height="22" fill="#6a6a6a"/><rect x="1363.5" y="982.0" width="3" height="12" rx="1.5" fill="#8c8c8c"/><rect x="1637.5" y="977" width="1" height="22" fill="#6a6a6a"/><rect x="1636.5" y="982.0" width="3" height="12" rx="1.5" fill="#8c8c8c"/><path d="M1338 981H1346V997L1342 993L1338 997Z" fill="#e07a50"/><path d="M1348 979V987M1344 983H1352" stroke="#eee" stroke-width="1.6"/><path d="M1380.5 984.0H1389.5L1385 990.0Z" fill="none" stroke="#aaaaaa" stroke-width="1"/><path d="M1509.5 984.0H1518.5L1514 990.0Z" fill="none" stroke="#aaaaaa" stroke-width="1"/><rect x="1727" y="978" width="1" height="20" fill="#444"/><path d="M1732.5 984.0H1741.5L1737 990.0Z" fill="#dddddd"/><g transform="translate(1768,987)"><path d="M-7 1V-3H5M7 -1V3H-5" stroke="#dcdcdc" stroke-width="1.6" fill="none"/><path d="M3 -6L7 -3L3 0ZM-3 0L-7 3L-3 6Z" fill="#dcdcdc"/></g><g transform="translate(1799,988)"><rect x="-9" y="-4" width="17" height="10" fill="#d8d8d8" stroke="#9a5a30" stroke-width="1.2"/><path d="M-9 -1.5H8M-9 3.5H8" stroke="#9a5a30" stroke-width="1"/><path d="M-5 -1V3M-1 -1V3M3 -1V3" stroke="#9a5a30" stroke-width="1.2"/><path d="M4 -10L10 -6.5L4 -3Z" fill="#e8e8e8"/></g><g fill="#888"><rect x="5" y="1011" width="1" height="1"/><rect x="8" y="1011" width="1" height="1"/><rect x="5" y="1014" width="1" height="1"/><rect x="8" y="1014" width="1" height="1"/><rect x="5" y="1017" width="1" height="1"/><rect x="8" y="1017" width="1" height="1"/><rect x="5" y="1020" width="1" height="1"/><rect x="8" y="1020" width="1" height="1"/><rect x="5" y="1023" width="1" height="1"/><rect x="8" y="1023" width="1" height="1"/><rect x="5" y="1026" width="1" height="1"/><rect x="8" y="1026" width="1" height="1"/><rect x="5" y="1029" width="1" height="1"/><rect x="8" y="1029" width="1" height="1"/><rect x="5" y="1032" width="1" height="1"/><rect x="8" y="1032" width="1" height="1"/><rect x="5" y="1035" width="1" height="1"/><rect x="8" y="1035" width="1" height="1"/></g><g fill="#888"><rect x="817" y="1011" width="1" height="1"/><rect x="820" y="1011" width="1" height="1"/><rect x="817" y="1014" width="1" height="1"/><rect x="820" y="1014" width="1" height="1"/><rect x="817" y="1017" width="1" height="1"/><rect x="820" y="1017" width="1" height="1"/><rect x="817" y="1020" width="1" height="1"/><rect x="820" y="1020" width="1" height="1"/><rect x="817" y="1023" width="1" height="1"/><rect x="820" y="1023" width="1" height="1"/><rect x="817" y="1026" width="1" height="1"/><rect x="820" y="1026" width="1" height="1"/><rect x="817" y="1029" width="1" height="1"/><rect x="820" y="1029" width="1" height="1"/><rect x="817" y="1032" width="1" height="1"/><rect x="820" y="1032" width="1" height="1"/><rect x="817" y="1035" width="1" height="1"/><rect x="820" y="1035" width="1" height="1"/></g><g fill="#888"><rect x="3" y="52" width="1" height="1"/><rect x="6" y="52" width="1" height="1"/><rect x="3" y="55" width="1" height="1"/><rect x="6" y="55" width="1" height="1"/><rect x="3" y="58" width="1" height="1"/><rect x="6" y="58" width="1" height="1"/><rect x="3" y="61" width="1" height="1"/><rect x="6" y="61" width="1" height="1"/><rect x="3" y="64" width="1" height="1"/><rect x="6" y="64" width="1" height="1"/><rect x="3" y="67" width="1" height="1"/><rect x="6" y="67" width="1" height="1"/><rect x="3" y="70" width="1" height="1"/><rect x="6" y="70" width="1" height="1"/><rect x="3" y="73" width="1" height="1"/><rect x="6" y="73" width="1" height="1"/></g><g fill="#888"><rect x="3" y="82" width="1" height="1"/><rect x="6" y="82" width="1" height="1"/><rect x="3" y="85" width="1" height="1"/><rect x="6" y="85" width="1" height="1"/><rect x="3" y="88" width="1" height="1"/><rect x="6" y="88" width="1" height="1"/><rect x="3" y="91" width="1" height="1"/><rect x="6" y="91" width="1" height="1"/><rect x="3" y="94" width="1" height="1"/><rect x="6" y="94" width="1" height="1"/><rect x="3" y="97" width="1" height="1"/><rect x="6" y="97" width="1" height="1"/><rect x="3" y="100" width="1" height="1"/><rect x="6" y="100" width="1" height="1"/><rect x="3" y="103" width="1" height="1"/><rect x="6" y="103" width="1" height="1"/><rect x="3" y="106" width="1" height="1"/><rect x="6" y="106" width="1" height="1"/><rect x="3" y="109" width="1" height="1"/><rect x="6" y="109" width="1" height="1"/><rect x="3" y="112" width="1" height="1"/><rect x="6" y="112" width="1" height="1"/><rect x="3" y="115" width="1" height="1"/><rect x="6" y="115" width="1" height="1"/><rect x="3" y="118" width="1" height="1"/><rect x="6" y="118" width="1" height="1"/><rect x="3" y="121" width="1" height="1"/><rect x="6" y="121" width="1" height="1"/><rect x="3" y="124" width="1" height="1"/><rect x="6" y="124" width="1" height="1"/><rect x="3" y="127" width="1" height="1"/><rect x="6" y="127" width="1" height="1"/><rect x="3" y="130" width="1" height="1"/><rect x="6" y="130" width="1" height="1"/><rect x="3" y="133" width="1" height="1"/><rect x="6" y="133" width="1" height="1"/><rect x="3" y="136" width="1" height="1"/><rect x="6" y="136" width="1" height="1"/><rect x="3" y="139" width="1" height="1"/><rect x="6" y="139" width="1" height="1"/><rect x="3" y="142" width="1" height="1"/><rect x="6" y="142" width="1" height="1"/></g><g fill="#888"><rect x="3" y="931" width="1" height="1"/><rect x="6" y="931" width="1" height="1"/><rect x="3" y="934" width="1" height="1"/><rect x="6" y="934" width="1" height="1"/><rect x="3" y="937" width="1" height="1"/><rect x="6" y="937" width="1" height="1"/><rect x="3" y="940" width="1" height="1"/><rect x="6" y="940" width="1" height="1"/><rect x="3" y="943" width="1" height="1"/><rect x="6" y="943" width="1" height="1"/><rect x="3" y="946" width="1" height="1"/><rect x="6" y="946" width="1" height="1"/><rect x="3" y="949" width="1" height="1"/><rect x="6" y="949" width="1" height="1"/><rect x="3" y="952" width="1" height="1"/><rect x="6" y="952" width="1" height="1"/><rect x="3" y="955" width="1" height="1"/><rect x="6" y="955" width="1" height="1"/><rect x="3" y="958" width="1" height="1"/><rect x="6" y="958" width="1" height="1"/></g><g fill="#888"><rect x="3" y="973" width="1" height="1"/><rect x="6" y="973" width="1" height="1"/><rect x="3" y="976" width="1" height="1"/><rect x="6" y="976" width="1" height="1"/><rect x="3" y="979" width="1" height="1"/><rect x="6" y="979" width="1" height="1"/><rect x="3" y="982" width="1" height="1"/><rect x="6" y="982" width="1" height="1"/><rect x="3" y="985" width="1" height="1"/><rect x="6" y="985" width="1" height="1"/><rect x="3" y="988" width="1" height="1"/><rect x="6" y="988" width="1" height="1"/><rect x="3" y="991" width="1" height="1"/><rect x="6" y="991" width="1" height="1"/><rect x="3" y="994" width="1" height="1"/><rect x="6" y="994" width="1" height="1"/><rect x="3" y="997" width="1" height="1"/><rect x="6" y="997" width="1" height="1"/><rect x="3" y="1000" width="1" height="1"/><rect x="6" y="1000" width="1" height="1"/></g></svg></body></html>
